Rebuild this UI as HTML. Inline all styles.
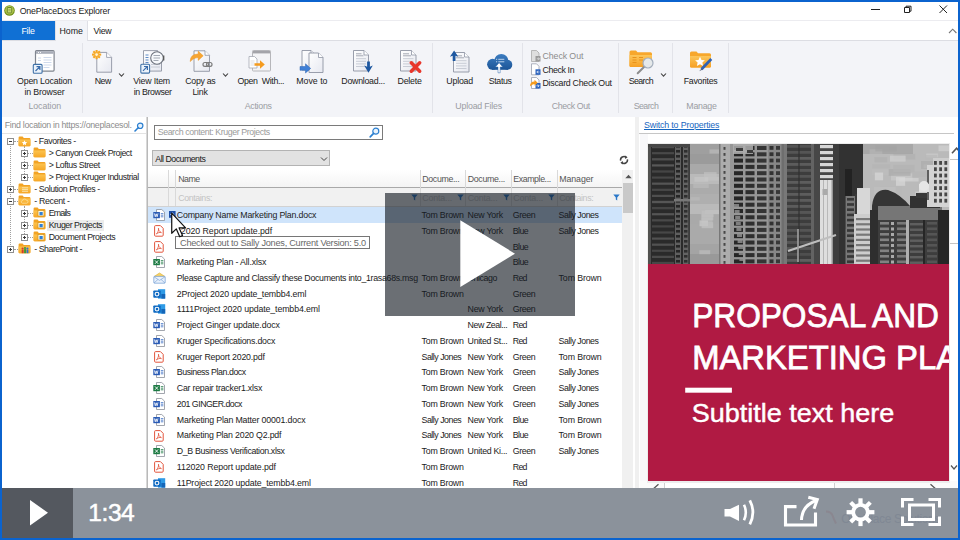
<!DOCTYPE html>
<html lang="en"><head><meta charset="utf-8"><title>OnePlaceDocs Explorer</title>
<style>
html,body{margin:0;padding:0;width:960px;height:540px;overflow:hidden;background:#fff;font-family:"Liberation Sans",sans-serif;}
#app{position:relative;width:960px;height:540px;overflow:hidden;background:#fff;}
.t{position:absolute;white-space:pre;}
.r{position:absolute;}
svg{position:absolute;overflow:visible;}
</style></head><body><div id="app">
<div class="r" style="left:0.0px;top:0.0px;width:960.0px;height:540.0px;background:#0b63ce;"></div>
<div class="r" style="left:2.0px;top:2.0px;width:956.0px;height:536.0px;background:#fff;"></div>
<div class="r" style="left:2.0px;top:20.0px;width:956.0px;height:1.0px;background:#ececf0;"></div>
<span class="t" style="left:19.7px;top:5.8px;font-size:8.8px;line-height:11.44px;color:#1a1a1a;letter-spacing:-0.170px;">OnePlaceDocs Explorer</span>
<svg style="left:3.5px;top:4.5px" width="11" height="11" viewBox="0 0 11 11"><circle cx="5.5" cy="5.5" r="5.3" fill="#6f8f1c"/><circle cx="5.5" cy="5.300" r="4.300" fill="#b4c94e"/><rect x="3.300" y="2.500" width="4.400" height="5.400" rx="0.600" fill="#cfdf80" stroke="#55751a" stroke-width="0.800"/><path d="M4.300 4.300h2.400M4.300 5.800h2.400" stroke="#6f8f1c" stroke-width="0.600"/></svg>
<svg style="left:860px;top:2px" width="98" height="18" viewBox="860 2 98 18"><path d="M871 9.5h9" stroke="#222" stroke-width="1" fill="none"/><path d="M904.5 7.5h5v5h-5zM906 7.5v-1.3h5v5h-1.4" stroke="#222" stroke-width="1" fill="none"/><path d="M939.5 5.5l7.5 7.5M947 5.5l-7.5 7.5" stroke="#222" stroke-width="1" fill="none"/></svg>
<div class="r" style="left:2.0px;top:21.0px;width:52.5px;height:18.8px;background:#1070d4;"></div>
<span class="t" style="left:21.5px;top:25.5px;font-size:8.8px;line-height:11.44px;color:#fff;letter-spacing:-0.297px;">File</span>
<div class="r" style="left:54.5px;top:21.0px;width:33.0px;height:20.0px;background:#f3f4f8;border-left:1px solid #e3e4ea;border-right:1px solid #e3e4ea;box-sizing:border-box;"></div>
<span class="t" style="left:93.5px;top:25.5px;font-size:8.8px;line-height:11.44px;color:#1a1a1a;letter-spacing:-0.230px;">View</span>
<svg style="left:948px;top:27px" width="10" height="8" viewBox="0 0 10 8"><path d="M1 6l3.7-3.8L8.4 6" stroke="#777" stroke-width="1.1" fill="none"/></svg>
<div class="r" style="left:87.5px;top:40.0px;width:870.5px;height:1.0px;background:#dcdde3;"></div>
<div class="r" style="left:2.0px;top:40.0px;width:52.5px;height:1.0px;background:#dcdde3;"></div>
<div class="r" style="left:2.0px;top:41.0px;width:956.0px;height:75.5px;background:#f3f4f8;"></div>
<div class="r" style="left:54.5px;top:21.0px;width:33.0px;height:21.0px;background:#f3f4f8;"></div>
<div class="r" style="left:54.5px;top:21.0px;width:1.0px;height:20.0px;background:#dfe0e6;"></div>
<div class="r" style="left:86.5px;top:21.0px;width:1.0px;height:20.0px;background:#dfe0e6;"></div>
<span class="t" style="left:59.5px;top:25.5px;font-size:8.8px;line-height:11.44px;color:#1a1a1a;letter-spacing:0.008px;">Home</span>
<div class="r" style="left:82.0px;top:43.0px;width:1.0px;height:70.0px;background:#e2e3e9;"></div>
<div class="r" style="left:432.0px;top:43.0px;width:1.0px;height:70.0px;background:#e2e3e9;"></div>
<div class="r" style="left:522.0px;top:43.0px;width:1.0px;height:70.0px;background:#e2e3e9;"></div>
<div class="r" style="left:617.8px;top:43.0px;width:1.0px;height:70.0px;background:#e2e3e9;"></div>
<div class="r" style="left:672.0px;top:43.0px;width:1.0px;height:70.0px;background:#e2e3e9;"></div>
<div class="r" style="left:727.8px;top:43.0px;width:1.0px;height:70.0px;background:#e2e3e9;"></div>
<span class="t" style="left:17.0px;top:75.8px;font-size:8.8px;line-height:11.44px;color:#222;letter-spacing:-0.172px;">Open Location</span>
<span class="t" style="left:24.5px;top:86.7px;font-size:8.8px;line-height:11.44px;color:#222;letter-spacing:-0.156px;">in Browser</span>
<span class="t" style="left:28.5px;top:101.0px;font-size:8.8px;line-height:11.44px;color:#9a9ca3;letter-spacing:-0.096px;">Location</span>
<span class="t" style="left:94.7px;top:75.8px;font-size:8.8px;line-height:11.44px;color:#222;letter-spacing:-0.503px;">New</span>
<span class="t" style="left:133.3px;top:75.8px;font-size:8.8px;line-height:11.44px;color:#222;letter-spacing:-0.197px;">View Item</span>
<span class="t" style="left:133.7px;top:86.7px;font-size:8.8px;line-height:11.44px;color:#222;letter-spacing:-0.356px;">in Browser</span>
<span class="t" style="left:185.3px;top:75.8px;font-size:8.8px;line-height:11.44px;color:#222;letter-spacing:-0.326px;">Copy as</span>
<span class="t" style="left:192.5px;top:86.7px;font-size:8.8px;line-height:11.44px;color:#222;letter-spacing:-0.285px;">Link</span>
<span class="t" style="left:237.5px;top:75.8px;font-size:8.8px;line-height:11.44px;color:#222;letter-spacing:-0.357px;">Open  With...</span>
<span class="t" style="left:296.3px;top:75.8px;font-size:8.8px;line-height:11.44px;color:#222;letter-spacing:-0.014px;">Move to</span>
<span class="t" style="left:341.3px;top:75.8px;font-size:8.8px;line-height:11.44px;color:#222;letter-spacing:-0.252px;">Download...</span>
<span class="t" style="left:397.5px;top:75.8px;font-size:8.8px;line-height:11.44px;color:#222;letter-spacing:-0.206px;">Delete</span>
<span class="t" style="left:244.7px;top:101.0px;font-size:8.8px;line-height:11.44px;color:#9a9ca3;letter-spacing:-0.266px;">Actions</span>
<span class="t" style="left:446.3px;top:75.8px;font-size:8.8px;line-height:11.44px;color:#222;letter-spacing:-0.198px;">Upload</span>
<span class="t" style="left:488.7px;top:75.8px;font-size:8.8px;line-height:11.44px;color:#222;letter-spacing:-0.326px;">Status</span>
<span class="t" style="left:455.3px;top:101.0px;font-size:8.8px;line-height:11.44px;color:#9a9ca3;letter-spacing:-0.184px;">Upload Files</span>
<span class="t" style="left:542.5px;top:50.8px;font-size:8.8px;line-height:11.44px;color:#8c8c8c;letter-spacing:-0.085px;">Check Out</span>
<span class="t" style="left:542.5px;top:64.5px;font-size:8.8px;line-height:11.44px;color:#222;letter-spacing:-0.377px;">Check In</span>
<span class="t" style="left:542.5px;top:78.0px;font-size:8.8px;line-height:11.44px;color:#222;letter-spacing:-0.272px;">Discard Check Out</span>
<span class="t" style="left:551.7px;top:101.0px;font-size:8.8px;line-height:11.44px;color:#9a9ca3;letter-spacing:-0.396px;">Check Out</span>
<span class="t" style="left:628.7px;top:75.8px;font-size:8.8px;line-height:11.44px;color:#222;letter-spacing:-0.596px;">Search</span>
<span class="t" style="left:633.7px;top:101.0px;font-size:8.8px;line-height:11.44px;color:#9a9ca3;letter-spacing:-0.546px;">Search</span>
<span class="t" style="left:683.7px;top:75.8px;font-size:8.8px;line-height:11.44px;color:#222;letter-spacing:-0.265px;">Favorites</span>
<span class="t" style="left:686.3px;top:101.0px;font-size:8.8px;line-height:11.44px;color:#9a9ca3;letter-spacing:-0.233px;">Manage</span>
<svg style="left:118.2px;top:71.5px" width="7" height="6" viewBox="0 0 7 6"><path d="M1 1.5l2.5 2.7L6 1.5" stroke="#444" stroke-width="1.1" fill="none"/></svg>
<svg style="left:222.3px;top:71.5px" width="7" height="6" viewBox="0 0 7 6"><path d="M1 1.5l2.5 2.7L6 1.5" stroke="#444" stroke-width="1.1" fill="none"/></svg>
<svg style="left:660.2px;top:71.5px" width="7" height="6" viewBox="0 0 7 6"><path d="M1 1.5l2.5 2.7L6 1.5" stroke="#444" stroke-width="1.1" fill="none"/></svg>
<svg style="left:0;top:44px" width="760" height="46" viewBox="0 44 760 46"><defs><linearGradient id="pg" x1="0" y1="0" x2="1" y2="1"><stop offset="0" stop-color="#ffffff"/><stop offset="1" stop-color="#e6e8f0"/></linearGradient><linearGradient id="cl" gradientUnits="userSpaceOnUse" x1="0" y1="54" x2="0" y2="70"><stop offset="0" stop-color="#3c7cc0"/><stop offset="1" stop-color="#1c5597"/></linearGradient><linearGradient id="fo" x1="0" y1="0" x2="0" y2="1"><stop offset="0" stop-color="#fcc65a"/><stop offset="1" stop-color="#f6a024"/></linearGradient></defs><rect x="35.5" y="50.7" width="18.600" height="20.400" rx="1" fill="#fff" stroke="#80858f" stroke-width="1.200"/><rect x="36" y="51.2" width="17.600" height="2.600" fill="#a9adb8"/><path d="M38 52.500h1M40 52.500h1" stroke="#fff" stroke-width="0.9"/><path d="M38 58h3M38 60.500h3M43.500 57.500h8M43.500 60h8M43.500 62.500h8M43.500 65h8M43.500 67.500h6" stroke="#c9d6ea" stroke-width="0.9"/><rect x="33.3" y="64.4" width="8.8" height="8.8" rx="1" fill="#eaf2fb" stroke="#3f71a8" stroke-width="1.1"/><path d="M35.5 71.0L39.699999999999996 66.80000000000001M36.49999999999999 66.60000000000001h3.4v3.4" fill="none" stroke="#3a6cab" stroke-width="1.200"/><path d="M96.8 52.4h9.8l5 5v14.8h-14.8z" fill="url(#pg)" stroke="#8e94a3" stroke-width="0.9"/><path d="M106.6 52.4v5h5" fill="#fff" stroke="#8e94a3" stroke-width="0.8"/><path d="M98.20 54.60L101.20 54.60" stroke="#f6a623" stroke-width="2.100"/><path d="M97.73 55.73L99.85 57.85" stroke="#f6a623" stroke-width="2.100"/><path d="M96.60 56.20L96.60 59.20" stroke="#f6a623" stroke-width="2.100"/><path d="M95.47 55.73L93.35 57.85" stroke="#f6a623" stroke-width="2.100"/><path d="M95.00 54.60L92.00 54.60" stroke="#f6a623" stroke-width="2.100"/><path d="M95.47 53.47L93.35 51.35" stroke="#f6a623" stroke-width="2.100"/><path d="M96.60 53.00L96.60 50.00" stroke="#f6a623" stroke-width="2.100"/><path d="M97.73 53.47L99.85 51.35" stroke="#f6a623" stroke-width="2.100"/><circle cx="96.6" cy="54.6" r="2.6" fill="#f8b23a"/><circle cx="96.6" cy="54.6" r="1.300" fill="#fff6dc"/><path d="M143.5 50.6h14l4 4v16.5h-18z" fill="url(#pg)" stroke="#8e94a3" stroke-width="0.9"/><path d="M157.5 50.6v4h4" fill="#fff" stroke="#8e94a3" stroke-width="0.8"/><path d="M145.500 55h3M145.500 57.500h3M145.500 60h3M145.500 62.500h3" stroke="#4c7fc0" stroke-width="0.9"/><path d="M151 64.500h9M151 67h9" stroke="#c3c7d1" stroke-width="0.9"/><circle cx="157" cy="58" r="6.300" fill="#f7f9fc" stroke="#6d727c" stroke-width="1.100"/><path d="M153.500 55.500h6.500M153.500 58h6.500M153.500 60.500h5" stroke="#9aa0ab" stroke-width="0.9"/><path d="M163.700 55.500v5" stroke="#555" stroke-width="1.300"/><rect x="140.8" y="64.3" width="8.8" height="8.8" rx="1" fill="#eaf2fb" stroke="#3f71a8" stroke-width="1.1"/><path d="M143.0 70.89999999999999L147.20000000000002 66.7M144.00000000000003 66.5h3.4v3.4" fill="none" stroke="#3a6cab" stroke-width="1.200"/><path d="M194 50.8h11.0l4.5 4.5v16.0h-15.5z" fill="url(#pg)" stroke="#8e94a3" stroke-width="0.9"/><path d="M205.0 50.8v4.5h4.5" fill="#fff" stroke="#8e94a3" stroke-width="0.8"/><path d="M190.200 61.500q0-7.500 8-7.500v-2.800l5 4.600-5 4.600v-2.900q-4.500 0-8 4z" fill="#f7a531" stroke="#e8901a" stroke-width="0.5"/><rect x="203" y="62.500" width="5.500" height="3.800" rx="1.900" fill="none" stroke="#7b7b7b" stroke-width="1.200"/><rect x="206.500" y="62.500" width="5.500" height="3.800" rx="1.900" fill="none" stroke="#7b7b7b" stroke-width="1.200"/><rect x="252.500" y="50.500" width="18" height="20.500" rx="0.8" fill="#f4f4f6" stroke="#b6b6ba" stroke-width="1"/><rect x="253" y="51" width="17" height="2.400" fill="#a4a4a9"/><path d="M249 56.500h5.500l2.500 2.500v9h-8z" fill="#fff" stroke="#a4a8b2" stroke-width="0.8"/><path d="M250.500 61h4M250.500 63h4M250.500 65h4" stroke="#d0d3da" stroke-width="0.700"/><path d="M254.500 63.200h5.500v-2.900l4.800 4.200-4.800 4.200v-2.900h-5.500z" fill="#f59b1d"/><path d="M302 50.5h9l4 4v15.5h-13z" fill="url(#pg)" stroke="#8e94a3" stroke-width="0.9"/><path d="M311 50.5v4h4" fill="#fff" stroke="#8e94a3" stroke-width="0.8"/><path d="M309 53h9.5l4.5 4.5v15.0h-14z" fill="url(#pg)" stroke="#8e94a3" stroke-width="0.9"/><path d="M318.5 53v4.5h4.5" fill="#fff" stroke="#8e94a3" stroke-width="0.8"/><path d="M300 66.500h5.500v-2.700l5.200 4.600-5.200 4.600v-2.700h-5.500z" fill="#3f7fd6" stroke="#2d64b3" stroke-width="0.5"/><path d="M353.5 50.5h10.5l4.5 4.5v16.0h-15z" fill="url(#pg)" stroke="#8e94a3" stroke-width="0.9"/><path d="M364.0 50.5v4.5h4.5" fill="#fff" stroke="#8e94a3" stroke-width="0.8"/><path d="M356.0 53.8h5.5M356.0 55.8h7.5" stroke="#9ca1ab" stroke-width="0.9"/><path d="M356.0 58.7h10" stroke="#c3c7d1" stroke-width="0.9"/><path d="M356.0 61.300000000000004h10" stroke="#c3c7d1" stroke-width="0.9"/><path d="M356.0 63.900000000000006h10" stroke="#c3c7d1" stroke-width="0.9"/><path d="M356.0 66.5h10" stroke="#c3c7d1" stroke-width="0.9"/><path d="M367.100 61.500h2.800v5.300l2.900-1.200-4.300 7.100-4.300-7.100 2.900 1.200z" fill="#1d57a0"/><path d="M400.5 50.5h11.0l4.5 4.5v16.0h-15.5z" fill="url(#pg)" stroke="#8e94a3" stroke-width="0.9"/><path d="M411.5 50.5v4.5h4.5" fill="#fff" stroke="#8e94a3" stroke-width="0.8"/><path d="M403.0 53.8h6.0M403.0 55.8h8.0" stroke="#9ca1ab" stroke-width="0.9"/><path d="M403.0 58.7h10.5" stroke="#c3c7d1" stroke-width="0.9"/><path d="M403.0 61.300000000000004h10.5" stroke="#c3c7d1" stroke-width="0.9"/><path d="M403.0 63.900000000000006h10.5" stroke="#c3c7d1" stroke-width="0.9"/><path d="M403.0 66.5h10.5" stroke="#c3c7d1" stroke-width="0.9"/><path d="M411.300 62.800l8.400 8.400M419.700 62.800l-8.400 8.400" stroke="#e8372c" stroke-width="3.500" stroke-linecap="round"/><path d="M453.5 52.5h11.0l4.5 4.5v15.0h-15.5z" fill="url(#pg)" stroke="#8e94a3" stroke-width="0.9"/><path d="M464.5 52.5v4.5h4.5" fill="#fff" stroke="#8e94a3" stroke-width="0.8"/><path d="M456.0 55.8h6.0M456.0 57.8h8.0" stroke="#9ca1ab" stroke-width="0.9"/><path d="M456.0 60.7h10.5" stroke="#c3c7d1" stroke-width="0.9"/><path d="M456.0 63.300000000000004h10.5" stroke="#c3c7d1" stroke-width="0.9"/><path d="M456.0 65.9h10.5" stroke="#c3c7d1" stroke-width="0.9"/><path d="M456.0 68.5h10.5" stroke="#c3c7d1" stroke-width="0.9"/><path d="M452.700 61h2.800v-5.300l2.800 1.100-4.200-6.300-4.200 6.300 2.800-1.100z" fill="#1d57a0"/><g fill="url(#cl)"><circle cx="492.600" cy="64.300" r="5.500"/><circle cx="501.300" cy="61" r="7.100"/><circle cx="507.300" cy="64.800" r="5"/><rect x="492" y="62" width="16" height="7.800"/></g><path d="M496 59.300h1.200M498.300 59.300h6M496 61.800h1.200M498.300 61.800h6" stroke="#cfe0f3" stroke-width="0.9"/><path d="M498 72.800v-5.800h-2.600l3.700-4.300 3.700 4.300h-2.600v5.800z" fill="#fff" stroke="#2a66ad" stroke-width="0.500"/><path d="M531.5 50.5h5l2.500 2.500v8.500h-7.500z" fill="#dedede" stroke="#a9a9a9" stroke-width="0.800"/><rect x="535.500" y="56" width="5" height="5.500" fill="#9a9a9a"/><path d="M536.800 58.800h2.400M538.300 57.500l1.200 1.300-1.200 1.300" stroke="#eee" stroke-width="0.700" fill="none"/><path d="M531.5 63.8h5l2.500 2.500v8.500h-7.500z" fill="#fff" stroke="#9ba0ad" stroke-width="0.800"/><rect x="535.500" y="69.300" width="5" height="5.500" fill="#2a62bd"/><path d="M539.500 72h-2.600M538 70.700l-1.200 1.300 1.200 1.300" stroke="#fff" stroke-width="0.700" fill="none"/><path d="M531.5 77.5h5l2.500 2.500v8.500h-7.500z" fill="#fff" stroke="#9ba0ad" stroke-width="0.800"/><rect x="535.500" y="83" width="5" height="5.500" fill="#2a62bd"/><path d="M536.500 85.800h2.400M537.900 84.500l1.200 1.300-1.200 1.300" stroke="#fff" stroke-width="0.700" fill="none"/><path d="M530 86.500q0-5 4.500-5v-1.800l3.200 3-3.200 3v-1.800q-2.500 0-4.500 2.600z" fill="#f59b1d"/><path d="M629.500 52q0-1.500 1.500-1.500h5l1.500 1.800h13q1.500 0 1.500 1.500v11.700q0 1.500-1.500 1.500h-19.500q-1.500 0-1.500-1.500z" fill="#f7a72c"/><path d="M629.500 55h22.500v10.500q0 1.500-1.500 1.500h-19.500q-1.500 0-1.500-1.500z" fill="url(#fo)"/><path d="M632.500 57.500h4M632.500 60h4M632.500 62.500h4M639 57.500h4M639 60h4" stroke="#e8921a" stroke-width="1"/><path d="M644.500 66.500l-6.800 6.800" stroke="#8d8d8d" stroke-width="2" stroke-linecap="round"/><circle cx="648" cy="63" r="5" fill="#e3eefa" fill-opacity="0.92" stroke="#a3adba" stroke-width="1.200"/><path d="M690 53q0-1.500 1.500-1.500h5l1.500 1.800h11.500q1.500 0 1.500 1.500v11.200q0 1.500-1.500 1.500h-18q-1.500 0-1.500-1.500z" fill="#f7a72c"/><path d="M690 56h21v10q0 1.500-1.500 1.500h-18q-1.500 0-1.500-1.500z" fill="url(#fo)"/><path d="M700 56.800l1.500 3.100 3.400.4-2.500 2.300.7 3.400-3.100-1.700-3.100 1.700.7-3.400-2.500-2.300 3.400-.4z" fill="#fff"/><path d="M711.300 59l-9.800 10.200" stroke="#2f62b5" stroke-width="2.700" stroke-linecap="butt"/><path d="M701.800 68.200l-2.600 3.100 3.600-1.700" fill="#56627a"/></svg>
<svg width="0" height="0" style="left:0;top:0"><defs><linearGradient id="fg" x1="0" y1="0" x2="0" y2="1"><stop offset="0" stop-color="#fcc450"/><stop offset="1" stop-color="#f6a726"/></linearGradient></defs></svg>
<span class="t" style="left:4.7px;top:120.0px;font-size:8.8px;line-height:11.44px;color:#8c8c8c;letter-spacing:-0.282px;">Find location in https://oneplacesol.</span>
<svg style="left:133.5px;top:121.5px" width="10" height="10" viewBox="0 0 10 10"><circle cx="6.2" cy="3.8" r="2.7" fill="#e8f2fb" stroke="#2b7fd0" stroke-width="1.2"/><path d="M4.2 5.8L1 9" stroke="#2b7fd0" stroke-width="1.6" stroke-linecap="round"/></svg>
<div class="r" style="left:2.0px;top:133.3px;width:143.5px;height:0.9px;background:#e3e3e3;"></div>
<div class="r" style="left:145.5px;top:117.0px;width:2.5px;height:371.0px;background:#b9b9b9;"></div>
<div class="r" style="left:146.3px;top:117.0px;width:0.9px;height:371.0px;background:#d8d8d8;"></div>
<div class="r" style="left:10px;top:146px;width:0;height:103px;border-left:1px dotted #a0a0a0"></div>
<div class="r" style="left:24px;top:146px;width:0;height:32px;border-left:1px dotted #a0a0a0"></div>
<div class="r" style="left:24px;top:206px;width:0;height:32px;border-left:1px dotted #a0a0a0"></div>
<svg style="left:6.9px;top:137.8px" width="7" height="7" viewBox="0 0 7 7"><rect x="0.5" y="0.5" width="6" height="6" fill="#fff" stroke="#8f8f8f" stroke-width="1"/><path d="M2 3.5h3" stroke="#3a3a3a" stroke-width="1" fill="none"/></svg>
<div class="r" style="left:13.9px;top:140.8px;width:4.5px;height:0;border-top:1px dotted #a0a0a0"></div>
<svg style="left:18.3px;top:135.5px" width="13" height="11" viewBox="0 0 13 11"><path d="M0.6 1.6q0-1 1-1h3l1.2 1.3h5.6q1 0 1 1v6.3q0 1-1 1H1.6q-1 0-1-1z" fill="#f2a324"/><path d="M0.6 3.4h11.8v5.8q0 1-1 1H1.6q-1 0-1-1z" fill="url(#fg)"/><path d="M6.5 4.2l.8 1.7 1.8.2-1.3 1.3.3 1.8-1.6-.9-1.6.9.3-1.8L3.9 6.1l1.8-.2z" fill="#fff"/></svg>
<span class="t" style="left:34.2px;top:136.3px;font-size:8.8px;line-height:11.44px;color:#1e1e1e;letter-spacing:-0.411px;">- Favorites -</span>
<svg style="left:21.0px;top:149.7px" width="7" height="7" viewBox="0 0 7 7"><rect x="0.5" y="0.5" width="6" height="6" fill="#fff" stroke="#8f8f8f" stroke-width="1"/><path d="M2 3.5h3M3.5 2v3" stroke="#3a3a3a" stroke-width="1" fill="none"/></svg>
<div class="r" style="left:28.0px;top:152.7px;width:4.5px;height:0;border-top:1px dotted #a0a0a0"></div>
<svg style="left:32.5px;top:147.39999999999998px" width="13" height="11" viewBox="0 0 13 11"><path d="M0.6 1.6q0-1 1-1h3l1.2 1.3h5.6q1 0 1 1v6.3q0 1-1 1H1.6q-1 0-1-1z" fill="#f2a324"/><path d="M0.6 3.4h11.8v5.8q0 1-1 1H1.6q-1 0-1-1z" fill="url(#fg)"/></svg>
<span class="t" style="left:48.7px;top:148.2px;font-size:8.8px;line-height:11.44px;color:#1e1e1e;letter-spacing:-0.484px;">&gt; Canyon Creek Project</span>
<svg style="left:21.0px;top:161.8px" width="7" height="7" viewBox="0 0 7 7"><rect x="0.5" y="0.5" width="6" height="6" fill="#fff" stroke="#8f8f8f" stroke-width="1"/><path d="M2 3.5h3M3.5 2v3" stroke="#3a3a3a" stroke-width="1" fill="none"/></svg>
<div class="r" style="left:28.0px;top:164.8px;width:4.5px;height:0;border-top:1px dotted #a0a0a0"></div>
<svg style="left:32.5px;top:159.5px" width="13" height="11" viewBox="0 0 13 11"><path d="M0.6 1.6q0-1 1-1h3l1.2 1.3h5.6q1 0 1 1v6.3q0 1-1 1H1.6q-1 0-1-1z" fill="#f2a324"/><path d="M0.6 3.4h11.8v5.8q0 1-1 1H1.6q-1 0-1-1z" fill="url(#fg)"/></svg>
<span class="t" style="left:48.7px;top:160.3px;font-size:8.8px;line-height:11.44px;color:#1e1e1e;letter-spacing:-0.431px;">&gt; Loftus Street</span>
<svg style="left:21.0px;top:173.6px" width="7" height="7" viewBox="0 0 7 7"><rect x="0.5" y="0.5" width="6" height="6" fill="#fff" stroke="#8f8f8f" stroke-width="1"/><path d="M2 3.5h3M3.5 2v3" stroke="#3a3a3a" stroke-width="1" fill="none"/></svg>
<div class="r" style="left:28.0px;top:176.6px;width:4.5px;height:0;border-top:1px dotted #a0a0a0"></div>
<svg style="left:32.5px;top:171.29999999999998px" width="13" height="11" viewBox="0 0 13 11"><path d="M0.6 1.6q0-1 1-1h3l1.2 1.3h5.6q1 0 1 1v6.3q0 1-1 1H1.6q-1 0-1-1z" fill="#f2a324"/><path d="M0.6 3.4h11.8v5.8q0 1-1 1H1.6q-1 0-1-1z" fill="url(#fg)"/></svg>
<span class="t" style="left:48.7px;top:172.1px;font-size:8.8px;line-height:11.44px;color:#1e1e1e;letter-spacing:-0.443px;">&gt; Project Kruger Industrial</span>
<svg style="left:6.9px;top:185.7px" width="7" height="7" viewBox="0 0 7 7"><rect x="0.5" y="0.5" width="6" height="6" fill="#fff" stroke="#8f8f8f" stroke-width="1"/><path d="M2 3.5h3M3.5 2v3" stroke="#3a3a3a" stroke-width="1" fill="none"/></svg>
<div class="r" style="left:13.9px;top:188.7px;width:4.5px;height:0;border-top:1px dotted #a0a0a0"></div>
<svg style="left:18.3px;top:183.39999999999998px" width="13" height="11" viewBox="0 0 13 11"><path d="M0.6 1.6q0-1 1-1h3l1.2 1.3h5.6q1 0 1 1v6.3q0 1-1 1H1.6q-1 0-1-1z" fill="#f2a324"/><path d="M0.6 3.4h11.8v5.8q0 1-1 1H1.6q-1 0-1-1z" fill="url(#fg)"/><path d="M4 4.8h6M4 6.6h6M4 8.3h6" stroke="#fbe7b4" stroke-width="0.9"/></svg>
<span class="t" style="left:34.2px;top:184.2px;font-size:8.8px;line-height:11.44px;color:#1e1e1e;letter-spacing:-0.420px;">- Solution Profiles -</span>
<svg style="left:6.9px;top:197.7px" width="7" height="7" viewBox="0 0 7 7"><rect x="0.5" y="0.5" width="6" height="6" fill="#fff" stroke="#8f8f8f" stroke-width="1"/><path d="M2 3.5h3" stroke="#3a3a3a" stroke-width="1" fill="none"/></svg>
<div class="r" style="left:13.9px;top:200.7px;width:4.5px;height:0;border-top:1px dotted #a0a0a0"></div>
<svg style="left:18.3px;top:195.39999999999998px" width="13" height="11" viewBox="0 0 13 11"><path d="M0.6 1.6q0-1 1-1h3l1.2 1.3h5.6q1 0 1 1v6.3q0 1-1 1H1.6q-1 0-1-1z" fill="#f2a324"/><path d="M0.6 3.4h11.8v5.8q0 1-1 1H1.6q-1 0-1-1z" fill="url(#fg)"/><path d="M4.2 8.2a1.4 1.4 0 0 1 .3-2.7 2 2 0 0 1 3.8-.3 1.5 1.5 0 0 1 .4 3z" fill="none" stroke="#fbe0a0" stroke-width="0.8"/></svg>
<span class="t" style="left:34.2px;top:196.2px;font-size:8.8px;line-height:11.44px;color:#1e1e1e;letter-spacing:-0.312px;">- Recent -</span>
<svg style="left:21.0px;top:209.6px" width="7" height="7" viewBox="0 0 7 7"><rect x="0.5" y="0.5" width="6" height="6" fill="#fff" stroke="#8f8f8f" stroke-width="1"/><path d="M2 3.5h3M3.5 2v3" stroke="#3a3a3a" stroke-width="1" fill="none"/></svg>
<div class="r" style="left:28.0px;top:212.6px;width:4.5px;height:0;border-top:1px dotted #a0a0a0"></div>
<svg style="left:32.5px;top:207.29999999999998px" width="13" height="11" viewBox="0 0 13 11"><path d="M0.6 1.6q0-1 1-1h3l1.2 1.3h5.6q1 0 1 1v6.3q0 1-1 1H1.6q-1 0-1-1z" fill="#f2a324"/><path d="M0.6 3.4h11.8v5.8q0 1-1 1H1.6q-1 0-1-1z" fill="url(#fg)"/><rect x="5" y="3.6" width="6" height="5.4" fill="#fff7dc" stroke="#c98a17" stroke-width="0.6"/><rect x="6.5" y="5" width="3.2" height="3.2" fill="#2f7fd6"/></svg>
<span class="t" style="left:48.7px;top:208.1px;font-size:8.8px;line-height:11.44px;color:#1e1e1e;letter-spacing:-0.851px;">Emails</span>
<div class="r" style="left:46.7px;top:219.6px;width:57.1px;height:11.0px;background:#ececec;"></div>
<svg style="left:21.0px;top:221.6px" width="7" height="7" viewBox="0 0 7 7"><rect x="0.5" y="0.5" width="6" height="6" fill="#fff" stroke="#8f8f8f" stroke-width="1"/><path d="M2 3.5h3M3.5 2v3" stroke="#3a3a3a" stroke-width="1" fill="none"/></svg>
<div class="r" style="left:28.0px;top:224.6px;width:4.5px;height:0;border-top:1px dotted #a0a0a0"></div>
<svg style="left:32.5px;top:219.29999999999998px" width="13" height="11" viewBox="0 0 13 11"><path d="M0.6 1.6q0-1 1-1h3l1.2 1.3h5.6q1 0 1 1v6.3q0 1-1 1H1.6q-1 0-1-1z" fill="#f2a324"/><path d="M0.6 3.4h11.8v5.8q0 1-1 1H1.6q-1 0-1-1z" fill="url(#fg)"/><rect x="5" y="3.6" width="6" height="5.4" fill="#fff7dc" stroke="#c98a17" stroke-width="0.6"/><rect x="6.5" y="5" width="3.2" height="3.2" fill="#2f7fd6"/></svg>
<span class="t" style="left:48.7px;top:220.1px;font-size:8.8px;line-height:11.44px;color:#1e1e1e;letter-spacing:-0.488px;">Kruger Projects</span>
<svg style="left:21.0px;top:233.7px" width="7" height="7" viewBox="0 0 7 7"><rect x="0.5" y="0.5" width="6" height="6" fill="#fff" stroke="#8f8f8f" stroke-width="1"/><path d="M2 3.5h3M3.5 2v3" stroke="#3a3a3a" stroke-width="1" fill="none"/></svg>
<div class="r" style="left:28.0px;top:236.7px;width:4.5px;height:0;border-top:1px dotted #a0a0a0"></div>
<svg style="left:32.5px;top:231.39999999999998px" width="13" height="11" viewBox="0 0 13 11"><path d="M0.6 1.6q0-1 1-1h3l1.2 1.3h5.6q1 0 1 1v6.3q0 1-1 1H1.6q-1 0-1-1z" fill="#f2a324"/><path d="M0.6 3.4h11.8v5.8q0 1-1 1H1.6q-1 0-1-1z" fill="url(#fg)"/><rect x="5" y="3.6" width="6" height="5.4" fill="#fff7dc" stroke="#c98a17" stroke-width="0.6"/><rect x="6.5" y="5" width="3.2" height="3.2" fill="#2f7fd6"/></svg>
<span class="t" style="left:48.7px;top:232.2px;font-size:8.8px;line-height:11.44px;color:#1e1e1e;letter-spacing:-0.455px;">Document Projects</span>
<svg style="left:6.9px;top:245.7px" width="7" height="7" viewBox="0 0 7 7"><rect x="0.5" y="0.5" width="6" height="6" fill="#fff" stroke="#8f8f8f" stroke-width="1"/><path d="M2 3.5h3M3.5 2v3" stroke="#3a3a3a" stroke-width="1" fill="none"/></svg>
<div class="r" style="left:13.9px;top:248.7px;width:4.5px;height:0;border-top:1px dotted #a0a0a0"></div>
<svg style="left:18.3px;top:243.39999999999998px" width="13" height="11" viewBox="0 0 13 11"><path d="M0.6 1.6q0-1 1-1h3l1.2 1.3h5.6q1 0 1 1v6.3q0 1-1 1H1.6q-1 0-1-1z" fill="#f2a324"/><path d="M0.6 3.4h11.8v5.8q0 1-1 1H1.6q-1 0-1-1z" fill="url(#fg)"/><circle cx="4.6" cy="5.5" r="1.1" fill="#d13c2f"/><rect x="3.7" y="6.6" width="1.9" height="3.6" fill="#d13c2f"/><circle cx="7" cy="5" r="1.1" fill="#3c9a3c"/><rect x="6.1" y="6.1" width="1.9" height="4.1" fill="#3c9a3c"/><circle cx="9.4" cy="5.5" r="1.1" fill="#2f6fd1"/><rect x="8.5" y="6.6" width="1.9" height="3.6" fill="#2f6fd1"/></svg>
<span class="t" style="left:34.2px;top:244.2px;font-size:8.8px;line-height:11.44px;color:#1e1e1e;letter-spacing:-0.463px;">- SharePoint -</span>
<div class="r" style="left:153.5px;top:124.5px;width:229.0px;height:15.0px;background:#fff;border:1px solid #7a7a7a;box-sizing:border-box;"></div>
<span class="t" style="left:157.7px;top:127.0px;font-size:8.8px;line-height:11.44px;color:#9a9a9a;letter-spacing:-0.406px;">Search content: Kruger Projects</span>
<svg style="left:369px;top:127px" width="11" height="11" viewBox="0 0 11 11"><circle cx="6.8" cy="4.2" r="3" fill="#eaf3fc" stroke="#2b7fd0" stroke-width="1.2"/><path d="M4.6 6.4L1.2 9.8" stroke="#2b7fd0" stroke-width="1.7" stroke-linecap="round"/></svg>
<div class="r" style="left:152.0px;top:150.3px;width:177.5px;height:15.4px;background:#e2e2e2;border:1px solid #b3b3b3;box-sizing:border-box;"></div>
<span class="t" style="left:155.3px;top:154.0px;font-size:8.8px;line-height:11.44px;color:#1a1a1a;letter-spacing:-0.517px;">All Documents</span>
<svg style="left:319.5px;top:155.5px" width="8" height="6" viewBox="0 0 8 6"><path d="M1 1.5l3 3 3-3" stroke="#444" stroke-width="1" fill="none"/></svg>
<svg style="left:618.5px;top:154.5px" width="10" height="10" viewBox="0 0 10 10"><path d="M1.6 5.6a3.4 3.4 0 0 1 5.6-3.2" fill="none" stroke="#444" stroke-width="1.5"/><path d="M8.4 4.4a3.4 3.4 0 0 1-5.6 3.2" fill="none" stroke="#444" stroke-width="1.5"/><path d="M6 .6l2.6 1.6-2.4 1.7zM4 9.4L1.4 7.8l2.4-1.7z" fill="#444"/></svg>
<div class="r" style="left:148.0px;top:169.5px;width:474.0px;height:17.5px;background:linear-gradient(#ffffff,#f4f4f4);"></div>
<div class="r" style="left:148.0px;top:187.0px;width:474.0px;height:1.0px;background:#a9a9a9;"></div>
<div class="r" style="left:148.0px;top:188.0px;width:474.0px;height:18.0px;background:#f1f1f1;"></div>
<div class="r" style="left:148.0px;top:206.0px;width:474.0px;height:1.0px;background:#d2d2d2;"></div>
<div class="r" style="left:168.2px;top:170.0px;width:1.0px;height:36.0px;background:#d9d9d9;"></div>
<div class="r" style="left:174.8px;top:170.0px;width:1.0px;height:36.0px;background:#d9d9d9;"></div>
<div class="r" style="left:420.2px;top:170.0px;width:1.0px;height:36.0px;background:#d9d9d9;"></div>
<div class="r" style="left:465.2px;top:170.0px;width:1.0px;height:36.0px;background:#d9d9d9;"></div>
<div class="r" style="left:511.2px;top:170.0px;width:1.0px;height:36.0px;background:#d9d9d9;"></div>
<div class="r" style="left:556.8px;top:170.0px;width:1.0px;height:36.0px;background:#d9d9d9;"></div>
<span class="t" style="left:178.2px;top:174.0px;font-size:8.8px;line-height:11.44px;color:#555;letter-spacing:-0.467px;">Name</span>
<span class="t" style="left:422.3px;top:174.0px;font-size:8.8px;line-height:11.44px;color:#555;letter-spacing:-0.344px;">Docume...</span>
<span class="t" style="left:467.7px;top:174.0px;font-size:8.8px;line-height:11.44px;color:#555;letter-spacing:-0.310px;">Docume...</span>
<span class="t" style="left:513.3px;top:174.0px;font-size:8.8px;line-height:11.44px;color:#555;letter-spacing:-0.416px;">Example...</span>
<span class="t" style="left:559.3px;top:174.0px;font-size:8.8px;line-height:11.44px;color:#555;letter-spacing:-0.105px;">Manager</span>
<span class="t" style="left:178.2px;top:192.8px;font-size:8.8px;line-height:11.44px;color:#c3c3c3;letter-spacing:-0.375px;">Contains:</span>
<span class="t" style="left:422.3px;top:192.8px;font-size:8.8px;line-height:11.44px;color:#c3c3c3;letter-spacing:-0.139px;">Conta...</span>
<span class="t" style="left:467.7px;top:192.8px;font-size:8.8px;line-height:11.44px;color:#c3c3c3;letter-spacing:-0.127px;">Conta...</span>
<span class="t" style="left:513.3px;top:192.8px;font-size:8.8px;line-height:11.44px;color:#c3c3c3;letter-spacing:-0.139px;">Conta...</span>
<span class="t" style="left:559.3px;top:192.8px;font-size:8.8px;line-height:11.44px;color:#c3c3c3;letter-spacing:-0.352px;">Contains:</span>
<svg style="left:411.1px;top:194px" width="7" height="7" viewBox="0 0 7 7"><path d="M0.3 0.5h6.4L4.2 3.4v3.2L2.8 5.6V3.4z" fill="#2b78c9"/></svg>
<svg style="left:456.8px;top:194px" width="7" height="7" viewBox="0 0 7 7"><path d="M0.3 0.5h6.4L4.2 3.4v3.2L2.8 5.6V3.4z" fill="#2b78c9"/></svg>
<svg style="left:502.5px;top:194px" width="7" height="7" viewBox="0 0 7 7"><path d="M0.3 0.5h6.4L4.2 3.4v3.2L2.8 5.6V3.4z" fill="#2b78c9"/></svg>
<svg style="left:547.8px;top:194px" width="7" height="7" viewBox="0 0 7 7"><path d="M0.3 0.5h6.4L4.2 3.4v3.2L2.8 5.6V3.4z" fill="#2b78c9"/></svg>
<svg style="left:612.5px;top:194px" width="7" height="7" viewBox="0 0 7 7"><path d="M0.3 0.5h6.4L4.2 3.4v3.2L2.8 5.6V3.4z" fill="#2b78c9"/></svg>
<div class="r" style="left:622.0px;top:169.5px;width:11.3px;height:318.5px;background:#f0f0f0;"></div>
<div class="r" style="left:623.3px;top:182.5px;width:9.4px;height:30.8px;background:#c9c9c9;"></div>
<svg style="left:624.5px;top:173.5px" width="7" height="5" viewBox="0 0 7 5"><path d="M0.3 4.3L3.5 0.8l3.2 3.5z" fill="#555"/></svg>
<div class="r" style="left:635.0px;top:117.0px;width:3.5px;height:371.0px;background:#f0f0f0;"></div>
<div class="r" style="left:148.0px;top:207.0px;width:474.0px;height:15.5px;background:#cfe4fb;"></div>
<svg style="left:153px;top:209.0px" width="12" height="12" viewBox="0 0 12 12"><path d="M3.5 0.5h5.2l2.8 2.6v8.4h-8z" fill="#fff" stroke="#8a8f99" stroke-width="0.8"/><path d="M7.8 4.6h2.6M7.8 6.2h2.6M7.8 7.8h2.6" stroke="#3b6fc4" stroke-width="0.8"/><rect x="0.3" y="3" width="6.6" height="6.2" fill="#2a5bb5"/><path d="M1.4 4.4l.9 3.4.9-3 .9 3 .9-3.4" fill="none" stroke="#fff" stroke-width="0.8"/></svg>
<span class="t" style="left:176.8px;top:210.0px;font-size:8.8px;line-height:11.44px;color:#222;letter-spacing:-0.194px;">Company Name Marketing Plan.docx</span>
<span class="t" style="left:421.5px;top:210.0px;font-size:8.8px;line-height:11.44px;color:#222;letter-spacing:-0.200px;">Tom Brown</span>
<span class="t" style="left:467.6px;top:210.0px;font-size:8.8px;line-height:11.44px;color:#222;letter-spacing:-0.246px;">New York</span>
<span class="t" style="left:512.8px;top:210.0px;font-size:8.8px;line-height:11.44px;color:#222;letter-spacing:-0.371px;">Green</span>
<span class="t" style="left:558.6px;top:210.0px;font-size:8.8px;line-height:11.44px;color:#222;letter-spacing:-0.464px;">Sally Jones</span>
<svg style="left:154.2px;top:225.14000000000001px" width="10" height="12" viewBox="0 0 10 12"><path d="M1.6 0.6h4.8l2.8 2.8v6.8q0 1-1 1H1.6q-1 0-1-1V1.6q0-1 1-1z" fill="#fff" stroke="#e2543c" stroke-width="1"/><path d="M2.4 9c1.4-1.4 2.6-4.2 2.2-5.8-.8.4.2 3.2 2.8 4.4-1.600-.6-3.800.2-5 1.400z" fill="none" stroke="#e2543c" stroke-width="0.8"/></svg>
<span class="t" style="left:180.8px;top:225.7px;font-size:8.8px;line-height:11.44px;color:#222;letter-spacing:-0.052px;">2020 Report update.pdf</span>
<span class="t" style="left:421.5px;top:225.7px;font-size:8.8px;line-height:11.44px;color:#222;letter-spacing:-0.200px;">Tom Brown</span>
<span class="t" style="left:467.6px;top:225.7px;font-size:8.8px;line-height:11.44px;color:#222;letter-spacing:-0.246px;">New York</span>
<span class="t" style="left:512.8px;top:225.7px;font-size:8.8px;line-height:11.44px;color:#222;letter-spacing:-0.602px;">Blue</span>
<span class="t" style="left:558.6px;top:225.7px;font-size:8.8px;line-height:11.44px;color:#222;letter-spacing:-0.464px;">Sally Jones</span>
<svg style="left:154.2px;top:240.88px" width="10" height="12" viewBox="0 0 10 12"><path d="M1.6 0.6h4.8l2.8 2.8v6.8q0 1-1 1H1.6q-1 0-1-1V1.6q0-1 1-1z" fill="#fff" stroke="#e2543c" stroke-width="1"/><path d="M2.4 9c1.4-1.4 2.6-4.2 2.2-5.8-.8.4.2 3.2 2.8 4.4-1.600-.6-3.800.2-5 1.400z" fill="none" stroke="#e2543c" stroke-width="0.8"/></svg>
<span class="t" style="left:512.8px;top:241.5px;font-size:8.8px;line-height:11.44px;color:#222;letter-spacing:-0.602px;">Blue</span>
<svg style="left:153px;top:256.22px" width="12" height="12" viewBox="0 0 12 12"><path d="M3.5 0.5h5.2l2.8 2.6v8.4h-8z" fill="#fff" stroke="#8a8f99" stroke-width="0.8"/><path d="M7.8 4.6h2.6M7.8 6.2h2.6M7.8 7.8h2.6" stroke="#1e7a45" stroke-width="0.8"/><rect x="0.3" y="3" width="6.6" height="6.2" fill="#1c7a43"/><path d="M2 4.4l3.2 3.4M5.2 4.4L2 7.8" fill="none" stroke="#fff" stroke-width="0.9"/></svg>
<span class="t" style="left:176.8px;top:257.2px;font-size:8.8px;line-height:11.44px;color:#222;letter-spacing:-0.160px;">Marketing Plan - All.xlsx</span>
<span class="t" style="left:512.8px;top:257.2px;font-size:8.8px;line-height:11.44px;color:#222;letter-spacing:-0.602px;">Blue</span>
<svg style="left:153px;top:271.96px" width="13" height="12" viewBox="0 0 13 12"><path d="M1 4.600L6.500 1l5.500 3.600z" fill="#f6d36a" stroke="#d8a928" stroke-width="0.6"/><rect x="0.8" y="4.400" width="11.400" height="6.800" rx="0.6" fill="#e9f1fb" stroke="#7fa6d8" stroke-width="0.8"/><path d="M1 4.800l5.500 3.600 5.500-3.600M1 11l4-3.600M12 11l-4-3.600" fill="none" stroke="#7fa6d8" stroke-width="0.7"/></svg>
<span class="t" style="left:176.8px;top:272.9px;font-size:8.8px;line-height:11.44px;color:#222;letter-spacing:-0.290px;">Please Capture and Classify these Documents into_1rasa68s.msg</span>
<span class="t" style="left:421.5px;top:272.9px;font-size:8.8px;line-height:11.44px;color:#222;letter-spacing:-0.200px;">Tom Brown</span>
<span class="t" style="left:467.6px;top:272.9px;font-size:8.8px;line-height:11.44px;color:#222;letter-spacing:-0.426px;">Chicago</span>
<span class="t" style="left:512.8px;top:272.9px;font-size:8.8px;line-height:11.44px;color:#222;letter-spacing:-0.714px;">Red</span>
<span class="t" style="left:558.6px;top:272.9px;font-size:8.8px;line-height:11.44px;color:#222;letter-spacing:-0.122px;">Tom Brown</span>
<svg style="left:153px;top:287.7px" width="13" height="12" viewBox="0 0 13 12"><rect x="5" y="1.2" width="7.2" height="9.4" fill="#2f9be6"/><rect x="8.4" y="6" width="3.8" height="4.6" fill="#1566b8"/><rect x="0.3" y="2.4" width="7.4" height="7.4" rx="0.8" fill="#0f6ac2"/><circle cx="4" cy="6.1" r="1.9" fill="none" stroke="#fff" stroke-width="1.1"/></svg>
<span class="t" style="left:176.8px;top:288.7px;font-size:8.8px;line-height:11.44px;color:#222;letter-spacing:-0.165px;">2Project 2020 update_tembb4.eml</span>
<span class="t" style="left:421.5px;top:288.7px;font-size:8.8px;line-height:11.44px;color:#222;letter-spacing:-0.200px;">Tom Brown</span>
<span class="t" style="left:512.8px;top:288.7px;font-size:8.8px;line-height:11.44px;color:#222;letter-spacing:-0.371px;">Green</span>
<svg style="left:153px;top:303.44px" width="13" height="12" viewBox="0 0 13 12"><rect x="5" y="1.2" width="7.2" height="9.4" fill="#2f9be6"/><rect x="8.4" y="6" width="3.8" height="4.6" fill="#1566b8"/><rect x="0.3" y="2.4" width="7.4" height="7.4" rx="0.8" fill="#0f6ac2"/><circle cx="4" cy="6.1" r="1.9" fill="none" stroke="#fff" stroke-width="1.1"/></svg>
<span class="t" style="left:176.8px;top:304.4px;font-size:8.8px;line-height:11.44px;color:#222;letter-spacing:-0.124px;">1111Project 2020 update_tembb4.eml</span>
<span class="t" style="left:467.6px;top:304.4px;font-size:8.8px;line-height:11.44px;color:#222;letter-spacing:-0.246px;">New York</span>
<span class="t" style="left:512.8px;top:304.4px;font-size:8.8px;line-height:11.44px;color:#222;letter-spacing:-0.371px;">Green</span>
<svg style="left:153px;top:319.18px" width="12" height="12" viewBox="0 0 12 12"><path d="M3.5 0.5h5.2l2.8 2.6v8.4h-8z" fill="#fff" stroke="#8a8f99" stroke-width="0.8"/><path d="M7.8 4.6h2.6M7.8 6.2h2.6M7.8 7.8h2.6" stroke="#3b6fc4" stroke-width="0.8"/><rect x="0.3" y="3" width="6.6" height="6.2" fill="#2a5bb5"/><path d="M1.4 4.4l.9 3.4.9-3 .9 3 .9-3.4" fill="none" stroke="#fff" stroke-width="0.8"/></svg>
<span class="t" style="left:176.8px;top:320.2px;font-size:8.8px;line-height:11.44px;color:#222;letter-spacing:-0.143px;">Project Ginger update.docx</span>
<span class="t" style="left:467.6px;top:320.2px;font-size:8.8px;line-height:11.44px;color:#222;letter-spacing:-0.436px;">New Zeal...</span>
<span class="t" style="left:512.8px;top:320.2px;font-size:8.8px;line-height:11.44px;color:#222;letter-spacing:-0.714px;">Red</span>
<svg style="left:153px;top:334.92px" width="12" height="12" viewBox="0 0 12 12"><path d="M3.5 0.5h5.2l2.8 2.6v8.4h-8z" fill="#fff" stroke="#8a8f99" stroke-width="0.8"/><path d="M7.8 4.6h2.6M7.8 6.2h2.6M7.8 7.8h2.6" stroke="#3b6fc4" stroke-width="0.8"/><rect x="0.3" y="3" width="6.6" height="6.2" fill="#2a5bb5"/><path d="M1.4 4.4l.9 3.4.9-3 .9 3 .9-3.4" fill="none" stroke="#fff" stroke-width="0.8"/></svg>
<span class="t" style="left:176.8px;top:335.9px;font-size:8.8px;line-height:11.44px;color:#222;letter-spacing:-0.225px;">Kruger Specifications.docx</span>
<span class="t" style="left:421.5px;top:335.9px;font-size:8.8px;line-height:11.44px;color:#222;letter-spacing:-0.200px;">Tom Brown</span>
<span class="t" style="left:467.6px;top:335.9px;font-size:8.8px;line-height:11.44px;color:#222;letter-spacing:-0.319px;">United St...</span>
<span class="t" style="left:512.8px;top:335.9px;font-size:8.8px;line-height:11.44px;color:#222;letter-spacing:-0.714px;">Red</span>
<span class="t" style="left:558.6px;top:335.9px;font-size:8.8px;line-height:11.44px;color:#222;letter-spacing:-0.464px;">Sally Jones</span>
<svg style="left:154.2px;top:351.05999999999995px" width="10" height="12" viewBox="0 0 10 12"><path d="M1.6 0.6h4.8l2.8 2.8v6.8q0 1-1 1H1.6q-1 0-1-1V1.6q0-1 1-1z" fill="#fff" stroke="#e2543c" stroke-width="1"/><path d="M2.4 9c1.4-1.4 2.6-4.2 2.2-5.8-.8.4.2 3.2 2.8 4.4-1.600-.6-3.800.2-5 1.400z" fill="none" stroke="#e2543c" stroke-width="0.8"/></svg>
<span class="t" style="left:176.8px;top:351.6px;font-size:8.8px;line-height:11.44px;color:#222;letter-spacing:-0.180px;">Kruger Report 2020.pdf</span>
<span class="t" style="left:421.5px;top:351.6px;font-size:8.8px;line-height:11.44px;color:#222;letter-spacing:-0.473px;">Sally Jones</span>
<span class="t" style="left:467.6px;top:351.6px;font-size:8.8px;line-height:11.44px;color:#222;letter-spacing:-0.246px;">New York</span>
<span class="t" style="left:512.8px;top:351.6px;font-size:8.8px;line-height:11.44px;color:#222;letter-spacing:-0.371px;">Green</span>
<span class="t" style="left:558.6px;top:351.6px;font-size:8.8px;line-height:11.44px;color:#222;letter-spacing:-0.122px;">Tom Brown</span>
<svg style="left:153px;top:366.4px" width="12" height="12" viewBox="0 0 12 12"><path d="M3.5 0.5h5.2l2.8 2.6v8.4h-8z" fill="#fff" stroke="#8a8f99" stroke-width="0.8"/><path d="M7.8 4.6h2.6M7.8 6.2h2.6M7.8 7.8h2.6" stroke="#3b6fc4" stroke-width="0.8"/><rect x="0.3" y="3" width="6.6" height="6.2" fill="#2a5bb5"/><path d="M1.4 4.4l.9 3.4.9-3 .9 3 .9-3.4" fill="none" stroke="#fff" stroke-width="0.8"/></svg>
<span class="t" style="left:176.8px;top:367.4px;font-size:8.8px;line-height:11.44px;color:#222;letter-spacing:-0.432px;">Business Plan.docx</span>
<span class="t" style="left:421.5px;top:367.4px;font-size:8.8px;line-height:11.44px;color:#222;letter-spacing:-0.200px;">Tom Brown</span>
<span class="t" style="left:467.6px;top:367.4px;font-size:8.8px;line-height:11.44px;color:#222;letter-spacing:-0.246px;">New York</span>
<span class="t" style="left:512.8px;top:367.4px;font-size:8.8px;line-height:11.44px;color:#222;letter-spacing:-0.371px;">Green</span>
<span class="t" style="left:558.6px;top:367.4px;font-size:8.8px;line-height:11.44px;color:#222;letter-spacing:-0.464px;">Sally Jones</span>
<svg style="left:153px;top:382.14px" width="12" height="12" viewBox="0 0 12 12"><path d="M3.5 0.5h5.2l2.8 2.6v8.4h-8z" fill="#fff" stroke="#8a8f99" stroke-width="0.8"/><path d="M7.8 4.6h2.6M7.8 6.2h2.6M7.8 7.8h2.6" stroke="#1e7a45" stroke-width="0.8"/><rect x="0.3" y="3" width="6.6" height="6.2" fill="#1c7a43"/><path d="M2 4.4l3.2 3.4M5.2 4.4L2 7.8" fill="none" stroke="#fff" stroke-width="0.9"/></svg>
<span class="t" style="left:176.8px;top:383.1px;font-size:8.8px;line-height:11.44px;color:#222;letter-spacing:-0.235px;">Car repair tracker1.xlsx</span>
<span class="t" style="left:421.5px;top:383.1px;font-size:8.8px;line-height:11.44px;color:#222;letter-spacing:-0.200px;">Tom Brown</span>
<span class="t" style="left:467.6px;top:383.1px;font-size:8.8px;line-height:11.44px;color:#222;letter-spacing:-0.246px;">New York</span>
<span class="t" style="left:512.8px;top:383.1px;font-size:8.8px;line-height:11.44px;color:#222;letter-spacing:-0.371px;">Green</span>
<span class="t" style="left:558.6px;top:383.1px;font-size:8.8px;line-height:11.44px;color:#222;letter-spacing:-0.464px;">Sally Jones</span>
<svg style="left:153px;top:397.88px" width="12" height="12" viewBox="0 0 12 12"><path d="M3.5 0.5h5.2l2.8 2.6v8.4h-8z" fill="#fff" stroke="#8a8f99" stroke-width="0.8"/><path d="M7.8 4.6h2.6M7.8 6.2h2.6M7.8 7.8h2.6" stroke="#3b6fc4" stroke-width="0.8"/><rect x="0.3" y="3" width="6.6" height="6.2" fill="#2a5bb5"/><path d="M1.4 4.4l.9 3.4.9-3 .9 3 .9-3.4" fill="none" stroke="#fff" stroke-width="0.8"/></svg>
<span class="t" style="left:176.8px;top:398.9px;font-size:8.8px;line-height:11.44px;color:#222;letter-spacing:-0.511px;">201 GINGER.docx</span>
<span class="t" style="left:421.5px;top:398.9px;font-size:8.8px;line-height:11.44px;color:#222;letter-spacing:-0.200px;">Tom Brown</span>
<span class="t" style="left:467.6px;top:398.9px;font-size:8.8px;line-height:11.44px;color:#222;letter-spacing:-0.246px;">New York</span>
<span class="t" style="left:512.8px;top:398.9px;font-size:8.8px;line-height:11.44px;color:#222;letter-spacing:-0.371px;">Green</span>
<span class="t" style="left:558.6px;top:398.9px;font-size:8.8px;line-height:11.44px;color:#222;letter-spacing:-0.464px;">Sally Jones</span>
<svg style="left:153px;top:413.62px" width="12" height="12" viewBox="0 0 12 12"><path d="M3.5 0.5h5.2l2.8 2.6v8.4h-8z" fill="#fff" stroke="#8a8f99" stroke-width="0.8"/><path d="M7.8 4.6h2.6M7.8 6.2h2.6M7.8 7.8h2.6" stroke="#3b6fc4" stroke-width="0.8"/><rect x="0.3" y="3" width="6.6" height="6.2" fill="#2a5bb5"/><path d="M1.4 4.4l.9 3.4.9-3 .9 3 .9-3.4" fill="none" stroke="#fff" stroke-width="0.8"/></svg>
<span class="t" style="left:176.8px;top:414.6px;font-size:8.8px;line-height:11.44px;color:#222;letter-spacing:-0.168px;">Marketing Plan Matter 00001.docx</span>
<span class="t" style="left:421.5px;top:414.6px;font-size:8.8px;line-height:11.44px;color:#222;letter-spacing:-0.473px;">Sally Jones</span>
<span class="t" style="left:467.6px;top:414.6px;font-size:8.8px;line-height:11.44px;color:#222;letter-spacing:-0.246px;">New York</span>
<span class="t" style="left:512.8px;top:414.6px;font-size:8.8px;line-height:11.44px;color:#222;letter-spacing:-0.602px;">Blue</span>
<span class="t" style="left:558.6px;top:414.6px;font-size:8.8px;line-height:11.44px;color:#222;letter-spacing:-0.122px;">Tom Brown</span>
<svg style="left:154.2px;top:429.76px" width="10" height="12" viewBox="0 0 10 12"><path d="M1.6 0.6h4.8l2.8 2.8v6.8q0 1-1 1H1.6q-1 0-1-1V1.6q0-1 1-1z" fill="#fff" stroke="#e2543c" stroke-width="1"/><path d="M2.4 9c1.4-1.4 2.6-4.2 2.2-5.8-.8.4.2 3.2 2.8 4.4-1.600-.6-3.800.2-5 1.400z" fill="none" stroke="#e2543c" stroke-width="0.8"/></svg>
<span class="t" style="left:176.8px;top:430.3px;font-size:8.8px;line-height:11.44px;color:#222;letter-spacing:-0.194px;">Marketing Plan 2020 Q2.pdf</span>
<span class="t" style="left:421.5px;top:430.3px;font-size:8.8px;line-height:11.44px;color:#222;letter-spacing:-0.473px;">Sally Jones</span>
<span class="t" style="left:467.6px;top:430.3px;font-size:8.8px;line-height:11.44px;color:#222;letter-spacing:-0.246px;">New York</span>
<span class="t" style="left:512.8px;top:430.3px;font-size:8.8px;line-height:11.44px;color:#222;letter-spacing:-0.602px;">Blue</span>
<span class="t" style="left:558.6px;top:430.3px;font-size:8.8px;line-height:11.44px;color:#222;letter-spacing:-0.122px;">Tom Brown</span>
<svg style="left:153px;top:445.1px" width="12" height="12" viewBox="0 0 12 12"><path d="M3.5 0.5h5.2l2.8 2.6v8.4h-8z" fill="#fff" stroke="#8a8f99" stroke-width="0.8"/><path d="M7.8 4.6h2.6M7.8 6.2h2.6M7.8 7.8h2.6" stroke="#1e7a45" stroke-width="0.8"/><rect x="0.3" y="3" width="6.6" height="6.2" fill="#1c7a43"/><path d="M2 4.4l3.2 3.4M5.2 4.4L2 7.8" fill="none" stroke="#fff" stroke-width="0.9"/></svg>
<span class="t" style="left:176.8px;top:446.1px;font-size:8.8px;line-height:11.44px;color:#222;letter-spacing:-0.351px;">D_B Business Verification.xlsx</span>
<span class="t" style="left:421.5px;top:446.1px;font-size:8.8px;line-height:11.44px;color:#222;letter-spacing:-0.200px;">Tom Brown</span>
<span class="t" style="left:467.6px;top:446.1px;font-size:8.8px;line-height:11.44px;color:#222;letter-spacing:-0.278px;">United Ki...</span>
<span class="t" style="left:512.8px;top:446.1px;font-size:8.8px;line-height:11.44px;color:#222;letter-spacing:-0.371px;">Green</span>
<span class="t" style="left:558.6px;top:446.1px;font-size:8.8px;line-height:11.44px;color:#222;letter-spacing:-0.464px;">Sally Jones</span>
<svg style="left:154.2px;top:461.24px" width="10" height="12" viewBox="0 0 10 12"><path d="M1.6 0.6h4.8l2.8 2.8v6.8q0 1-1 1H1.6q-1 0-1-1V1.6q0-1 1-1z" fill="#fff" stroke="#e2543c" stroke-width="1"/><path d="M2.4 9c1.4-1.4 2.6-4.2 2.2-5.8-.8.4.2 3.2 2.8 4.4-1.600-.6-3.800.2-5 1.400z" fill="none" stroke="#e2543c" stroke-width="0.8"/></svg>
<span class="t" style="left:176.8px;top:461.8px;font-size:8.8px;line-height:11.44px;color:#222;letter-spacing:-0.103px;">112020 Report update.pdf</span>
<span class="t" style="left:421.5px;top:461.8px;font-size:8.8px;line-height:11.44px;color:#222;letter-spacing:-0.200px;">Tom Brown</span>
<span class="t" style="left:512.8px;top:461.8px;font-size:8.8px;line-height:11.44px;color:#222;letter-spacing:-0.714px;">Red</span>
<svg style="left:153px;top:476.58px" width="13" height="12" viewBox="0 0 13 12"><rect x="5" y="1.2" width="7.2" height="9.4" fill="#2f9be6"/><rect x="8.4" y="6" width="3.8" height="4.6" fill="#1566b8"/><rect x="0.3" y="2.4" width="7.4" height="7.4" rx="0.8" fill="#0f6ac2"/><circle cx="4" cy="6.1" r="1.9" fill="none" stroke="#fff" stroke-width="1.1"/></svg>
<span class="t" style="left:176.8px;top:477.6px;font-size:8.8px;line-height:11.44px;color:#222;letter-spacing:-0.148px;">11Project 2020 update_tembb4.eml</span>
<span class="t" style="left:421.5px;top:477.6px;font-size:8.8px;line-height:11.44px;color:#222;letter-spacing:-0.200px;">Tom Brown</span>
<span class="t" style="left:512.8px;top:477.6px;font-size:8.8px;line-height:11.44px;color:#222;letter-spacing:-0.714px;">Red</span>
<svg style="left:168.5px;top:211px" width="7" height="7" viewBox="0 0 7 7"><rect x="0" y="0" width="6.600" height="6.800" fill="#1d4fa8"/><path d="M1.400 3.400h3M3.200 1.800l1.600 1.600-1.600 1.600" stroke="#fff" stroke-width="1" fill="none"/></svg>
<div class="r" style="left:175.4px;top:235.5px;width:195.0px;height:13.8px;background:#fff;border:1px solid #767676;box-sizing:border-box;"></div>
<span class="t" style="left:180.0px;top:237.6px;font-size:9.2px;line-height:11.96px;color:#6a6a6a;letter-spacing:-0.257px;">Checked out to Sally Jones, Current Version: 5.0</span>
<svg style="left:170.6px;top:211.800px" width="17" height="27" viewBox="0 0 14 22"><path d="M0.600 0.800v16.600l3.800-3.600 2.800 6.500 2.300-1-2.800-6.300h5.300z" fill="#fff" stroke="#111" stroke-width="1" stroke-linejoin="round"/></svg>
<span class="t" style="left:644.0px;top:119.8px;font-size:8.8px;line-height:11.44px;color:#1565c0;letter-spacing:-0.147px;text-decoration:underline;">Switch to Properties</span>
<div class="r" style="left:639.0px;top:132.8px;width:315.0px;height:1.0px;background:#c6c6c6;"></div>
<div class="r" style="left:949.0px;top:144.0px;width:8.5px;height:338.0px;background:#fff;"></div>
<div class="r" style="left:949.5px;top:159.0px;width:8.0px;height:0.8px;background:#c4c4c4;"></div>
<div class="r" style="left:949.5px;top:243.0px;width:8.0px;height:0.8px;background:#c4c4c4;"></div>
<svg style="left:950.5px;top:146.5px" width="10" height="8" viewBox="0 0 10 8"><path d="M1 6.300l4.600-5 4.600 5" stroke="#555" stroke-width="1.600" fill="none"/></svg>
<svg style="left:949.5px;top:463.500px" width="8" height="7" viewBox="0 0 8 7"><path d="M1 1.500l3 3.500 3-3.500" stroke="#555" stroke-width="1.200" fill="none"/></svg>
<div class="r" style="left:640.0px;top:134.0px;width:8.0px;height:354.0px;background:#f8f8fa;"></div>
<div class="r" style="left:640.0px;top:481.3px;width:317.0px;height:6.7px;background:#fbfbfb;"></div>
<div class="r" style="left:664.0px;top:481.5px;width:170.5px;height:6.5px;background:#fff;border-left:1px solid #cfcfcf;border-right:1px solid #cfcfcf;box-sizing:border-box;"></div>
<svg style="left:652.500px;top:484px" width="7" height="7" viewBox="0 0 7 7"><path d="M5.500 0.300l-4.500 4 4.500 4" stroke="#555" stroke-width="1.300" fill="none"/></svg>
<svg style="left:929px;top:484px" width="7" height="7" viewBox="0 0 7 7"><path d="M1.500 0.300l4.500 4-4.500 4" stroke="#555" stroke-width="1.300" fill="none"/></svg>
<div class="r" style="left:647.0px;top:143.0px;width:303.0px;height:340.0px;background:#ededed;"></div>
<svg style="left:648px;top:144px" width="301" height="120" viewBox="0 0 301 120"><defs><filter id="bl" x="0" y="0" width="100%" height="100%"><feGaussianBlur stdDeviation="0.75"/></filter><clipPath id="pc"><rect x="0" y="0" width="301" height="120"/></clipPath></defs><g clip-path="url(#pc)"><g filter="url(#bl)"><rect x="0.0" y="0.0" width="301.0" height="120.0" fill="#969696"/><rect x="0.0" y="0.0" width="42.0" height="120.0" fill="#2c2c2c"/><rect x="4.0" y="2.0" width="22.0" height="2.2" fill="#4e4e4e"/><rect x="4.0" y="8.1" width="22.0" height="2.2" fill="#484848"/><rect x="4.0" y="14.2" width="22.0" height="2.2" fill="#505050"/><rect x="4.0" y="20.3" width="22.0" height="2.2" fill="#585858"/><rect x="4.0" y="26.4" width="22.0" height="2.2" fill="#454545"/><rect x="4.0" y="32.5" width="22.0" height="2.2" fill="#464646"/><rect x="4.0" y="38.6" width="22.0" height="2.2" fill="#555555"/><rect x="4.0" y="44.7" width="22.0" height="2.2" fill="#474747"/><rect x="4.0" y="50.8" width="22.0" height="2.2" fill="#4f4f4f"/><rect x="4.0" y="56.9" width="22.0" height="2.2" fill="#565656"/><rect x="4.0" y="63.0" width="22.0" height="2.2" fill="#454545"/><rect x="4.0" y="69.1" width="22.0" height="2.2" fill="#545454"/><rect x="4.0" y="75.2" width="22.0" height="2.2" fill="#4a4a4a"/><rect x="4.0" y="81.3" width="22.0" height="2.2" fill="#454545"/><rect x="4.0" y="87.4" width="22.0" height="2.2" fill="#464646"/><rect x="4.0" y="93.5" width="22.0" height="2.2" fill="#515151"/><rect x="4.0" y="99.6" width="22.0" height="2.2" fill="#515151"/><rect x="4.0" y="105.7" width="22.0" height="2.2" fill="#464646"/><rect x="4.0" y="111.8" width="22.0" height="2.2" fill="#4b4b4b"/><rect x="4.0" y="117.9" width="22.0" height="2.2" fill="#464646"/><rect x="27.0" y="0.0" width="6.0" height="120.0" fill="#5f5f5f"/><rect x="35.0" y="0.0" width="5.5" height="120.0" fill="#646464"/><rect x="28.0" y="1.0" width="4.0" height="2.6" fill="#282828"/><rect x="36.0" y="1.0" width="3.5" height="2.6" fill="#2d2d2d"/><rect x="28.0" y="6.0" width="4.0" height="2.6" fill="#282828"/><rect x="36.0" y="6.0" width="3.5" height="2.6" fill="#2d2d2d"/><rect x="28.0" y="11.0" width="4.0" height="2.6" fill="#282828"/><rect x="36.0" y="11.0" width="3.5" height="2.6" fill="#2d2d2d"/><rect x="28.0" y="16.0" width="4.0" height="2.6" fill="#282828"/><rect x="36.0" y="16.0" width="3.5" height="2.6" fill="#2d2d2d"/><rect x="28.0" y="21.0" width="4.0" height="2.6" fill="#282828"/><rect x="36.0" y="21.0" width="3.5" height="2.6" fill="#2d2d2d"/><rect x="28.0" y="26.0" width="4.0" height="2.6" fill="#282828"/><rect x="36.0" y="26.0" width="3.5" height="2.6" fill="#2d2d2d"/><rect x="28.0" y="31.0" width="4.0" height="2.6" fill="#282828"/><rect x="36.0" y="31.0" width="3.5" height="2.6" fill="#2d2d2d"/><rect x="28.0" y="36.0" width="4.0" height="2.6" fill="#282828"/><rect x="36.0" y="36.0" width="3.5" height="2.6" fill="#2d2d2d"/><rect x="28.0" y="41.0" width="4.0" height="2.6" fill="#282828"/><rect x="36.0" y="41.0" width="3.5" height="2.6" fill="#2d2d2d"/><rect x="28.0" y="46.0" width="4.0" height="2.6" fill="#282828"/><rect x="36.0" y="46.0" width="3.5" height="2.6" fill="#2d2d2d"/><rect x="28.0" y="51.0" width="4.0" height="2.6" fill="#282828"/><rect x="36.0" y="51.0" width="3.5" height="2.6" fill="#2d2d2d"/><rect x="28.0" y="56.0" width="4.0" height="2.6" fill="#282828"/><rect x="36.0" y="56.0" width="3.5" height="2.6" fill="#2d2d2d"/><rect x="28.0" y="61.0" width="4.0" height="2.6" fill="#282828"/><rect x="36.0" y="61.0" width="3.5" height="2.6" fill="#2d2d2d"/><rect x="28.0" y="66.0" width="4.0" height="2.6" fill="#282828"/><rect x="36.0" y="66.0" width="3.5" height="2.6" fill="#2d2d2d"/><rect x="28.0" y="71.0" width="4.0" height="2.6" fill="#282828"/><rect x="36.0" y="71.0" width="3.5" height="2.6" fill="#2d2d2d"/><rect x="28.0" y="76.0" width="4.0" height="2.6" fill="#282828"/><rect x="36.0" y="76.0" width="3.5" height="2.6" fill="#2d2d2d"/><rect x="28.0" y="81.0" width="4.0" height="2.6" fill="#282828"/><rect x="36.0" y="81.0" width="3.5" height="2.6" fill="#2d2d2d"/><rect x="28.0" y="86.0" width="4.0" height="2.6" fill="#282828"/><rect x="36.0" y="86.0" width="3.5" height="2.6" fill="#2d2d2d"/><rect x="28.0" y="91.0" width="4.0" height="2.6" fill="#282828"/><rect x="36.0" y="91.0" width="3.5" height="2.6" fill="#2d2d2d"/><rect x="28.0" y="96.0" width="4.0" height="2.6" fill="#282828"/><rect x="36.0" y="96.0" width="3.5" height="2.6" fill="#2d2d2d"/><rect x="28.0" y="101.0" width="4.0" height="2.6" fill="#282828"/><rect x="36.0" y="101.0" width="3.5" height="2.6" fill="#2d2d2d"/><rect x="28.0" y="106.0" width="4.0" height="2.6" fill="#282828"/><rect x="36.0" y="106.0" width="3.5" height="2.6" fill="#2d2d2d"/><rect x="28.0" y="111.0" width="4.0" height="2.6" fill="#282828"/><rect x="36.0" y="111.0" width="3.5" height="2.6" fill="#2d2d2d"/><rect x="28.0" y="116.0" width="4.0" height="2.6" fill="#282828"/><rect x="36.0" y="116.0" width="3.5" height="2.6" fill="#2d2d2d"/><rect x="0.0" y="0.0" width="3.0" height="120.0" fill="#505050"/><rect x="40.5" y="0.0" width="1.5" height="120.0" fill="#3c3c3c"/><rect x="26.0" y="55.0" width="16.0" height="2.5" fill="#787878"/><rect x="0.0" y="0.0" width="42.0" height="3.0" fill="#464646"/><rect x="42.0" y="0.0" width="29.0" height="10.0" fill="#9f9f9f"/><rect x="42.0" y="10.0" width="29.0" height="10.0" fill="#9b9b9b"/><rect x="42.0" y="20.0" width="29.0" height="10.0" fill="#a9a9a9"/><rect x="42.0" y="30.0" width="29.0" height="10.0" fill="#bababa"/><rect x="42.0" y="40.0" width="29.0" height="10.0" fill="#ababab"/><rect x="42.0" y="50.0" width="29.0" height="10.0" fill="#afafaf"/><rect x="42.0" y="60.0" width="29.0" height="10.0" fill="#bababa"/><rect x="42.0" y="70.0" width="29.0" height="10.0" fill="#a9a9a9"/><rect x="42.0" y="80.0" width="29.0" height="10.0" fill="#aaaaaa"/><rect x="42.0" y="90.0" width="29.0" height="10.0" fill="#aaaaaa"/><rect x="42.0" y="100.0" width="29.0" height="10.0" fill="#a4a4a4"/><rect x="42.0" y="110.0" width="29.0" height="10.0" fill="#999999"/><rect x="61.5" y="5.4" width="14.9" height="4.2" fill="#bcbcbc" opacity="0.7"/><rect x="52.8" y="65.7" width="12.5" height="5.7" fill="#bbbbbb" opacity="0.7"/><rect x="53.6" y="73.5" width="11.0" height="5.2" fill="#bababa" opacity="0.7"/><rect x="53.3" y="71.2" width="12.0" height="5.1" fill="#c2c2c2" opacity="0.7"/><rect x="51.3" y="106.2" width="10.9" height="4.0" fill="#bdbdbd" opacity="0.7"/><rect x="56.0" y="28.1" width="12.6" height="5.1" fill="#c2c2c2" opacity="0.7"/><rect x="56.6" y="33.1" width="15.8" height="3.5" fill="#c5c5c5" opacity="0.7"/><rect x="45.3" y="39.3" width="15.5" height="4.7" fill="#bababa" opacity="0.7"/><rect x="57.3" y="65.9" width="15.0" height="4.3" fill="#c3c3c3" opacity="0.7"/><rect x="53.9" y="66.7" width="11.6" height="6.4" fill="#c0c0c0" opacity="0.7"/><rect x="51.5" y="76.4" width="8.5" height="5.8" fill="#cccccc" opacity="0.7"/><rect x="53.6" y="78.3" width="11.6" height="5.9" fill="#c3c3c3" opacity="0.7"/><rect x="42.5" y="53.1" width="9.3" height="3.5" fill="#b9b9b9" opacity="0.7"/><rect x="46.4" y="33.1" width="13.9" height="4.6" fill="#c7c7c7" opacity="0.7"/><rect x="71.0" y="0.0" width="14.0" height="120.0" fill="#acacac"/><rect x="71.0" y="0.0" width="1.5" height="120.0" fill="#787878"/><rect x="75.5" y="3.0" width="2.0" height="2.8" fill="#464646"/><rect x="75.5" y="9.0" width="2.0" height="2.8" fill="#464646"/><rect x="75.5" y="15.0" width="2.0" height="2.8" fill="#464646"/><rect x="75.5" y="21.0" width="2.0" height="2.8" fill="#464646"/><rect x="75.5" y="27.0" width="2.0" height="2.8" fill="#464646"/><rect x="75.5" y="33.0" width="2.0" height="2.8" fill="#464646"/><rect x="75.5" y="39.0" width="2.0" height="2.8" fill="#464646"/><rect x="75.5" y="45.0" width="2.0" height="2.8" fill="#464646"/><rect x="75.5" y="51.0" width="2.0" height="2.8" fill="#464646"/><rect x="75.5" y="57.0" width="2.0" height="2.8" fill="#464646"/><rect x="75.5" y="63.0" width="2.0" height="2.8" fill="#464646"/><rect x="75.5" y="69.0" width="2.0" height="2.8" fill="#464646"/><rect x="75.5" y="75.0" width="2.0" height="2.8" fill="#464646"/><rect x="75.5" y="81.0" width="2.0" height="2.8" fill="#464646"/><rect x="75.5" y="87.0" width="2.0" height="2.8" fill="#464646"/><rect x="75.5" y="93.0" width="2.0" height="2.8" fill="#464646"/><rect x="75.5" y="99.0" width="2.0" height="2.8" fill="#464646"/><rect x="75.5" y="105.0" width="2.0" height="2.8" fill="#464646"/><rect x="75.5" y="111.0" width="2.0" height="2.8" fill="#464646"/><rect x="75.5" y="117.0" width="2.0" height="2.8" fill="#464646"/><rect x="82.0" y="0.0" width="3.0" height="120.0" fill="#969696"/><rect x="85.0" y="0.0" width="35.0" height="120.0" fill="#969696"/><rect x="86.0" y="2.0" width="9.0" height="4.0" fill="#262626"/><rect x="97.5" y="2.0" width="9.0" height="4.0" fill="#2d2d2d"/><rect x="109.0" y="2.0" width="9.5" height="4.0" fill="#343434"/><rect x="86.0" y="8.3" width="9.0" height="4.0" fill="#262626"/><rect x="97.5" y="8.3" width="9.0" height="4.0" fill="#2d2d2d"/><rect x="109.0" y="8.3" width="9.5" height="4.0" fill="#343434"/><rect x="86.0" y="14.6" width="9.0" height="4.0" fill="#262626"/><rect x="97.5" y="14.6" width="9.0" height="4.0" fill="#2d2d2d"/><rect x="109.0" y="14.6" width="9.5" height="4.0" fill="#343434"/><rect x="86.0" y="20.9" width="9.0" height="4.0" fill="#262626"/><rect x="97.5" y="20.9" width="9.0" height="4.0" fill="#2d2d2d"/><rect x="109.0" y="20.9" width="9.5" height="4.0" fill="#343434"/><rect x="86.0" y="27.2" width="9.0" height="4.0" fill="#262626"/><rect x="97.5" y="27.2" width="9.0" height="4.0" fill="#2d2d2d"/><rect x="109.0" y="27.2" width="9.5" height="4.0" fill="#343434"/><rect x="86.0" y="33.5" width="9.0" height="4.0" fill="#262626"/><rect x="97.5" y="33.5" width="9.0" height="4.0" fill="#2d2d2d"/><rect x="109.0" y="33.5" width="9.5" height="4.0" fill="#343434"/><rect x="86.0" y="39.8" width="9.0" height="4.0" fill="#262626"/><rect x="97.5" y="39.8" width="9.0" height="4.0" fill="#2d2d2d"/><rect x="109.0" y="39.8" width="9.5" height="4.0" fill="#343434"/><rect x="86.0" y="46.1" width="9.0" height="4.0" fill="#262626"/><rect x="97.5" y="46.1" width="9.0" height="4.0" fill="#2d2d2d"/><rect x="109.0" y="46.1" width="9.5" height="4.0" fill="#343434"/><rect x="86.0" y="52.4" width="9.0" height="4.0" fill="#262626"/><rect x="97.5" y="52.4" width="9.0" height="4.0" fill="#2d2d2d"/><rect x="109.0" y="52.4" width="9.5" height="4.0" fill="#343434"/><rect x="86.0" y="58.7" width="9.0" height="4.0" fill="#262626"/><rect x="97.5" y="58.7" width="9.0" height="4.0" fill="#2d2d2d"/><rect x="109.0" y="58.7" width="9.5" height="4.0" fill="#343434"/><rect x="86.0" y="65.0" width="9.0" height="4.0" fill="#262626"/><rect x="97.5" y="65.0" width="9.0" height="4.0" fill="#2d2d2d"/><rect x="109.0" y="65.0" width="9.5" height="4.0" fill="#343434"/><rect x="86.0" y="71.3" width="9.0" height="4.0" fill="#262626"/><rect x="97.5" y="71.3" width="9.0" height="4.0" fill="#2d2d2d"/><rect x="109.0" y="71.3" width="9.5" height="4.0" fill="#343434"/><rect x="86.0" y="77.6" width="9.0" height="4.0" fill="#262626"/><rect x="97.5" y="77.6" width="9.0" height="4.0" fill="#2d2d2d"/><rect x="109.0" y="77.6" width="9.5" height="4.0" fill="#343434"/><rect x="86.0" y="83.9" width="9.0" height="4.0" fill="#262626"/><rect x="97.5" y="83.9" width="9.0" height="4.0" fill="#2d2d2d"/><rect x="109.0" y="83.9" width="9.5" height="4.0" fill="#343434"/><rect x="86.0" y="90.2" width="9.0" height="4.0" fill="#262626"/><rect x="97.5" y="90.2" width="9.0" height="4.0" fill="#2d2d2d"/><rect x="109.0" y="90.2" width="9.5" height="4.0" fill="#343434"/><rect x="86.0" y="96.5" width="9.0" height="4.0" fill="#262626"/><rect x="97.5" y="96.5" width="9.0" height="4.0" fill="#2d2d2d"/><rect x="109.0" y="96.5" width="9.5" height="4.0" fill="#343434"/><rect x="86.0" y="102.8" width="9.0" height="4.0" fill="#262626"/><rect x="97.5" y="102.8" width="9.0" height="4.0" fill="#2d2d2d"/><rect x="109.0" y="102.8" width="9.5" height="4.0" fill="#343434"/><rect x="86.0" y="109.1" width="9.0" height="4.0" fill="#262626"/><rect x="97.5" y="109.1" width="9.0" height="4.0" fill="#2d2d2d"/><rect x="109.0" y="109.1" width="9.5" height="4.0" fill="#343434"/><rect x="86.0" y="115.4" width="9.0" height="4.0" fill="#262626"/><rect x="97.5" y="115.4" width="9.0" height="4.0" fill="#2d2d2d"/><rect x="109.0" y="115.4" width="9.5" height="4.0" fill="#343434"/><rect x="85.0" y="0.0" width="20.0" height="10.0" fill="#afafaf" opacity="0.85"/><rect x="88.0" y="4.0" width="7.0" height="3.0" fill="#3c3c3c"/><rect x="99.0" y="6.0" width="6.0" height="3.0" fill="#3c3c3c"/><rect x="86.0" y="60.0" width="5.0" height="3.0" fill="#969696" opacity="0.8"/><rect x="86.6" y="66.0" width="5.0" height="3.0" fill="#969696" opacity="0.8"/><rect x="87.2" y="72.0" width="5.0" height="3.0" fill="#969696" opacity="0.8"/><rect x="87.8" y="78.0" width="5.0" height="3.0" fill="#969696" opacity="0.8"/><rect x="88.4" y="84.0" width="5.0" height="3.0" fill="#969696" opacity="0.8"/><rect x="89.0" y="90.0" width="5.0" height="3.0" fill="#969696" opacity="0.8"/><rect x="89.6" y="96.0" width="5.0" height="3.0" fill="#969696" opacity="0.8"/><rect x="90.2" y="102.0" width="5.0" height="3.0" fill="#969696" opacity="0.8"/><rect x="90.8" y="108.0" width="5.0" height="3.0" fill="#969696" opacity="0.8"/><rect x="91.4" y="114.0" width="5.0" height="3.0" fill="#969696" opacity="0.8"/><rect x="120.0" y="0.0" width="16.0" height="120.0" fill="#878787"/><rect x="121.5" y="2.0" width="4.0" height="3.8" fill="#323232"/><rect x="128.0" y="2.0" width="4.0" height="3.8" fill="#373737"/><rect x="121.5" y="8.3" width="4.0" height="3.8" fill="#323232"/><rect x="128.0" y="8.3" width="4.0" height="3.8" fill="#373737"/><rect x="121.5" y="14.6" width="4.0" height="3.8" fill="#323232"/><rect x="128.0" y="14.6" width="4.0" height="3.8" fill="#373737"/><rect x="121.5" y="20.9" width="4.0" height="3.8" fill="#323232"/><rect x="128.0" y="20.9" width="4.0" height="3.8" fill="#373737"/><rect x="121.5" y="27.2" width="4.0" height="3.8" fill="#323232"/><rect x="128.0" y="27.2" width="4.0" height="3.8" fill="#373737"/><rect x="121.5" y="33.5" width="4.0" height="3.8" fill="#323232"/><rect x="128.0" y="33.5" width="4.0" height="3.8" fill="#373737"/><rect x="121.5" y="39.8" width="4.0" height="3.8" fill="#323232"/><rect x="128.0" y="39.8" width="4.0" height="3.8" fill="#373737"/><rect x="121.5" y="46.1" width="4.0" height="3.8" fill="#323232"/><rect x="128.0" y="46.1" width="4.0" height="3.8" fill="#373737"/><rect x="121.5" y="52.4" width="4.0" height="3.8" fill="#323232"/><rect x="128.0" y="52.4" width="4.0" height="3.8" fill="#373737"/><rect x="121.5" y="58.7" width="4.0" height="3.8" fill="#323232"/><rect x="128.0" y="58.7" width="4.0" height="3.8" fill="#373737"/><rect x="121.5" y="65.0" width="4.0" height="3.8" fill="#323232"/><rect x="128.0" y="65.0" width="4.0" height="3.8" fill="#373737"/><rect x="121.5" y="71.3" width="4.0" height="3.8" fill="#323232"/><rect x="128.0" y="71.3" width="4.0" height="3.8" fill="#373737"/><rect x="121.5" y="77.6" width="4.0" height="3.8" fill="#323232"/><rect x="128.0" y="77.6" width="4.0" height="3.8" fill="#373737"/><rect x="121.5" y="83.9" width="4.0" height="3.8" fill="#323232"/><rect x="128.0" y="83.9" width="4.0" height="3.8" fill="#373737"/><rect x="121.5" y="90.2" width="4.0" height="3.8" fill="#323232"/><rect x="128.0" y="90.2" width="4.0" height="3.8" fill="#373737"/><rect x="121.5" y="96.5" width="4.0" height="3.8" fill="#323232"/><rect x="128.0" y="96.5" width="4.0" height="3.8" fill="#373737"/><rect x="121.5" y="102.8" width="4.0" height="3.8" fill="#323232"/><rect x="128.0" y="102.8" width="4.0" height="3.8" fill="#373737"/><rect x="121.5" y="109.1" width="4.0" height="3.8" fill="#323232"/><rect x="128.0" y="109.1" width="4.0" height="3.8" fill="#373737"/><rect x="121.5" y="115.4" width="4.0" height="3.8" fill="#323232"/><rect x="128.0" y="115.4" width="4.0" height="3.8" fill="#373737"/><rect x="133.5" y="0.0" width="2.5" height="120.0" fill="#6e6e6e"/><rect x="136.0" y="0.0" width="36.0" height="120.0" fill="#3e3e3e"/><rect x="139.0" y="1.0" width="24.0" height="2.8" fill="#525252"/><rect x="139.0" y="7.0" width="24.0" height="2.8" fill="#555555"/><rect x="139.0" y="13.0" width="24.0" height="2.8" fill="#5e5e5e"/><rect x="139.0" y="19.0" width="24.0" height="2.8" fill="#5c5c5c"/><rect x="139.0" y="25.0" width="24.0" height="2.8" fill="#585858"/><rect x="139.0" y="31.0" width="24.0" height="2.8" fill="#545454"/><rect x="139.0" y="37.0" width="24.0" height="2.8" fill="#5d5d5d"/><rect x="139.0" y="43.0" width="24.0" height="2.8" fill="#585858"/><rect x="139.0" y="49.0" width="24.0" height="2.8" fill="#5d5d5d"/><rect x="139.0" y="55.0" width="24.0" height="2.8" fill="#5b5b5b"/><rect x="139.0" y="61.0" width="24.0" height="2.8" fill="#5c5c5c"/><rect x="139.0" y="67.0" width="24.0" height="2.8" fill="#575757"/><rect x="139.0" y="73.0" width="24.0" height="2.8" fill="#545454"/><rect x="139.0" y="79.0" width="24.0" height="2.8" fill="#525252"/><rect x="139.0" y="85.0" width="24.0" height="2.8" fill="#555555"/><rect x="139.0" y="91.0" width="24.0" height="2.8" fill="#545454"/><rect x="139.0" y="97.0" width="24.0" height="2.8" fill="#575757"/><rect x="139.0" y="103.0" width="24.0" height="2.8" fill="#575757"/><rect x="139.0" y="109.0" width="24.0" height="2.8" fill="#505050"/><rect x="139.0" y="115.0" width="24.0" height="2.8" fill="#5f5f5f"/><rect x="136.0" y="0.0" width="3.0" height="120.0" fill="#787878"/><rect x="163.0" y="0.0" width="3.0" height="120.0" fill="#646464"/><rect x="166.0" y="0.0" width="6.0" height="120.0" fill="#464646"/><rect x="150.0" y="0.0" width="2.0" height="120.0" fill="#323232" opacity="0.6"/><rect x="172.0" y="0.0" width="13.0" height="36.0" fill="#464646"/><rect x="172.0" y="1.0" width="13.0" height="3.2" fill="#d7d7d7"/><rect x="172.0" y="7.0" width="13.0" height="3.2" fill="#d7d7d7"/><rect x="172.0" y="13.0" width="13.0" height="3.2" fill="#d7d7d7"/><rect x="172.0" y="19.0" width="13.0" height="3.2" fill="#d7d7d7"/><rect x="172.0" y="25.0" width="13.0" height="3.2" fill="#d7d7d7"/><rect x="172.0" y="31.0" width="13.0" height="3.2" fill="#d7d7d7"/><rect x="172.0" y="36.0" width="11.5" height="84.0" fill="#dedede"/><rect x="175.0" y="36.0" width="1.0" height="84.0" fill="#b4b4b4"/><rect x="179.0" y="36.0" width="1.0" height="84.0" fill="#b9b9b9"/><rect x="174.5" y="45.0" width="5.0" height="6.0" fill="#aaaaaa"/><rect x="185.0" y="0.0" width="30.0" height="120.0" fill="#303030"/><rect x="185.0" y="0.0" width="6.0" height="120.0" fill="#3c3c3c"/><rect x="197.0" y="25.0" width="7.0" height="60.0" fill="#242424"/><rect x="197.5" y="52.0" width="10.0" height="68.0" fill="#787878"/><rect x="199.0" y="54.0" width="7.0" height="2.6" fill="#373737"/><rect x="199.0" y="59.2" width="7.0" height="2.6" fill="#373737"/><rect x="199.0" y="64.4" width="7.0" height="2.6" fill="#373737"/><rect x="199.0" y="69.6" width="7.0" height="2.6" fill="#373737"/><rect x="199.0" y="74.8" width="7.0" height="2.6" fill="#373737"/><rect x="199.0" y="80.0" width="7.0" height="2.6" fill="#373737"/><rect x="199.0" y="85.2" width="7.0" height="2.6" fill="#373737"/><rect x="199.0" y="90.4" width="7.0" height="2.6" fill="#373737"/><rect x="199.0" y="95.6" width="7.0" height="2.6" fill="#373737"/><rect x="199.0" y="100.8" width="7.0" height="2.6" fill="#373737"/><rect x="199.0" y="106.0" width="7.0" height="2.6" fill="#373737"/><rect x="199.0" y="111.2" width="7.0" height="2.6" fill="#373737"/><rect x="199.0" y="116.4" width="7.0" height="2.6" fill="#373737"/><rect x="207.0" y="50.0" width="8.0" height="70.0" fill="#373737"/><rect x="215.0" y="0.0" width="86.0" height="66.0" fill="#bababa"/><rect x="278.2" y="9.5" width="11.9" height="3.9" fill="#cccccc" opacity="0.7"/><rect x="243.1" y="29.4" width="21.3" height="7.1" fill="#cacaca" opacity="0.7"/><rect x="287.2" y="34.1" width="18.4" height="5.7" fill="#d5d5d5" opacity="0.7"/><rect x="275.6" y="20.4" width="13.6" height="3.6" fill="#d2d2d2" opacity="0.7"/><rect x="245.4" y="9.9" width="21.8" height="5.6" fill="#b1b1b1" opacity="0.7"/><rect x="240.8" y="2.7" width="8.0" height="3.9" fill="#b0b0b0" opacity="0.7"/><rect x="287.1" y="31.9" width="9.0" height="4.2" fill="#c2c2c2" opacity="0.7"/><rect x="226.3" y="13.1" width="12.9" height="5.2" fill="#b1b1b1" opacity="0.7"/><rect x="223.8" y="25.4" width="21.7" height="5.9" fill="#bdbdbd" opacity="0.7"/><rect x="221.5" y="5.3" width="12.8" height="4.6" fill="#d6d6d6" opacity="0.7"/><rect x="227.3" y="1.2" width="21.3" height="6.2" fill="#b3b3b3" opacity="0.7"/><rect x="267.4" y="47.5" width="18.6" height="4.8" fill="#d3d3d3" opacity="0.7"/><rect x="280.6" y="36.2" width="11.7" height="5.2" fill="#b4b4b4" opacity="0.7"/><rect x="242.0" y="11.6" width="15.6" height="6.0" fill="#d2d2d2" opacity="0.7"/><rect x="232.0" y="42.2" width="21.8" height="8.1" fill="#b9b9b9" opacity="0.7"/><rect x="277.2" y="38.5" width="11.2" height="6.1" fill="#c0c0c0" opacity="0.7"/><rect x="270.6" y="51.5" width="19.1" height="5.8" fill="#b6b6b6" opacity="0.7"/><rect x="267.6" y="49.7" width="14.3" height="8.6" fill="#c0c0c0" opacity="0.7"/><rect x="287.6" y="19.0" width="11.1" height="4.4" fill="#b6b6b6" opacity="0.7"/><rect x="240.7" y="25.1" width="21.8" height="6.7" fill="#aaaaaa" opacity="0.7"/><rect x="251.4" y="34.0" width="19.2" height="3.5" fill="#d4d4d4" opacity="0.7"/><rect x="224.1" y="20.2" width="18.0" height="4.2" fill="#b5b5b5" opacity="0.7"/><rect x="248.0" y="33.1" width="9.2" height="8.7" fill="#d8d8d8" opacity="0.7"/><rect x="245.1" y="20.9" width="21.3" height="7.3" fill="#b4b4b4" opacity="0.7"/><rect x="290.5" y="1.4" width="16.3" height="5.8" fill="#d3d3d3" opacity="0.7"/><rect x="226.1" y="43.0" width="21.7" height="6.9" fill="#c0c0c0" opacity="0.7"/><rect x="226.8" y="28.5" width="8.3" height="7.8" fill="#d8d8d8" opacity="0.7"/><rect x="264.4" y="27.4" width="21.1" height="5.6" fill="#b6b6b6" opacity="0.7"/><rect x="277.8" y="11.0" width="11.5" height="4.8" fill="#b9b9b9" opacity="0.7"/><rect x="273.0" y="17.0" width="15.6" height="8.0" fill="#adadad" opacity="0.7"/><rect x="215.0" y="0.0" width="50.0" height="10.0" fill="#969696" opacity="0.5"/><rect x="209.0" y="44.0" width="13.0" height="76.0" fill="#d7d7d7"/><rect x="206.0" y="70.0" width="18.0" height="50.0" fill="#cdcdcd"/><rect x="208.0" y="74.0" width="14.0" height="2.2" fill="#787878"/><rect x="208.0" y="79.2" width="14.0" height="2.2" fill="#787878"/><rect x="208.0" y="84.4" width="14.0" height="2.2" fill="#787878"/><rect x="208.0" y="89.6" width="14.0" height="2.2" fill="#787878"/><rect x="208.0" y="94.8" width="14.0" height="2.2" fill="#787878"/><rect x="208.0" y="100.0" width="14.0" height="2.2" fill="#787878"/><rect x="208.0" y="105.2" width="14.0" height="2.2" fill="#787878"/><rect x="208.0" y="110.4" width="14.0" height="2.2" fill="#787878"/><rect x="208.0" y="115.6" width="14.0" height="2.2" fill="#787878"/><path d="M224 62 Q226 44 240 46 Q252 50 262 62 L262 70 L224 70z" fill="#343434"/><rect x="222.0" y="66.0" width="8.0" height="54.0" fill="#2d2d2d"/><rect x="230.0" y="62.0" width="64.0" height="14.0" fill="#767676"/><rect x="230.0" y="76.0" width="64.0" height="44.0" fill="#3e3e3e"/><rect x="232.0" y="78.0" width="9.0" height="2.6" fill="#828282"/><rect x="243.0" y="78.0" width="3.0" height="3.0" fill="#aaaaaa"/><rect x="249.0" y="78.0" width="9.0" height="2.6" fill="#787878"/><rect x="262.0" y="79.0" width="14.0" height="2.4" fill="#5f5f5f"/><rect x="279.0" y="78.0" width="10.0" height="2.6" fill="#555555"/><rect x="232.0" y="83.5" width="9.0" height="2.6" fill="#828282"/><rect x="243.0" y="83.5" width="3.0" height="3.0" fill="#aaaaaa"/><rect x="249.0" y="83.5" width="9.0" height="2.6" fill="#787878"/><rect x="262.0" y="84.5" width="14.0" height="2.4" fill="#5f5f5f"/><rect x="279.0" y="83.5" width="10.0" height="2.6" fill="#555555"/><rect x="232.0" y="89.0" width="9.0" height="2.6" fill="#828282"/><rect x="243.0" y="89.0" width="3.0" height="3.0" fill="#aaaaaa"/><rect x="249.0" y="89.0" width="9.0" height="2.6" fill="#787878"/><rect x="262.0" y="90.0" width="14.0" height="2.4" fill="#5f5f5f"/><rect x="279.0" y="89.0" width="10.0" height="2.6" fill="#555555"/><rect x="232.0" y="94.5" width="9.0" height="2.6" fill="#828282"/><rect x="243.0" y="94.5" width="3.0" height="3.0" fill="#aaaaaa"/><rect x="249.0" y="94.5" width="9.0" height="2.6" fill="#787878"/><rect x="262.0" y="95.5" width="14.0" height="2.4" fill="#5f5f5f"/><rect x="279.0" y="94.5" width="10.0" height="2.6" fill="#555555"/><rect x="232.0" y="100.0" width="9.0" height="2.6" fill="#828282"/><rect x="243.0" y="100.0" width="3.0" height="3.0" fill="#aaaaaa"/><rect x="249.0" y="100.0" width="9.0" height="2.6" fill="#787878"/><rect x="262.0" y="101.0" width="14.0" height="2.4" fill="#5f5f5f"/><rect x="279.0" y="100.0" width="10.0" height="2.6" fill="#555555"/><rect x="232.0" y="105.5" width="9.0" height="2.6" fill="#828282"/><rect x="243.0" y="105.5" width="3.0" height="3.0" fill="#aaaaaa"/><rect x="249.0" y="105.5" width="9.0" height="2.6" fill="#787878"/><rect x="262.0" y="106.5" width="14.0" height="2.4" fill="#5f5f5f"/><rect x="279.0" y="105.5" width="10.0" height="2.6" fill="#555555"/><rect x="232.0" y="111.0" width="9.0" height="2.6" fill="#828282"/><rect x="243.0" y="111.0" width="3.0" height="3.0" fill="#aaaaaa"/><rect x="249.0" y="111.0" width="9.0" height="2.6" fill="#787878"/><rect x="262.0" y="112.0" width="14.0" height="2.4" fill="#5f5f5f"/><rect x="279.0" y="111.0" width="10.0" height="2.6" fill="#555555"/><rect x="232.0" y="116.5" width="9.0" height="2.6" fill="#828282"/><rect x="243.0" y="116.5" width="3.0" height="3.0" fill="#aaaaaa"/><rect x="249.0" y="116.5" width="9.0" height="2.6" fill="#787878"/><rect x="262.0" y="117.5" width="14.0" height="2.4" fill="#5f5f5f"/><rect x="279.0" y="116.5" width="10.0" height="2.6" fill="#555555"/><rect x="258.0" y="76.0" width="3.0" height="44.0" fill="#afafaf"/><rect x="275.0" y="76.0" width="2.0" height="44.0" fill="#282828"/><rect x="262.0" y="52.0" width="30.0" height="12.0" fill="#303030"/><rect x="268.0" y="49.0" width="16.0" height="5.0" fill="#373737"/><rect x="285.0" y="14.0" width="16.0" height="8.0" fill="#cdcdcd"/><rect x="279.0" y="21.0" width="22.0" height="42.0" fill="#d4d4d4"/><rect x="279.0" y="26.0" width="2.0" height="30.0" fill="#5f5f5f"/><rect x="286.0" y="17.0" width="2.8" height="3.8" fill="#464646"/><rect x="291.2" y="17.0" width="2.8" height="3.8" fill="#464646"/><rect x="296.4" y="17.0" width="2.8" height="3.8" fill="#464646"/><rect x="286.0" y="23.3" width="2.8" height="3.8" fill="#464646"/><rect x="291.2" y="23.3" width="2.8" height="3.8" fill="#464646"/><rect x="296.4" y="23.3" width="2.8" height="3.8" fill="#464646"/><rect x="286.0" y="29.6" width="2.8" height="3.8" fill="#464646"/><rect x="291.2" y="29.6" width="2.8" height="3.8" fill="#464646"/><rect x="296.4" y="29.6" width="2.8" height="3.8" fill="#464646"/><rect x="286.0" y="35.9" width="2.8" height="3.8" fill="#464646"/><rect x="291.2" y="35.9" width="2.8" height="3.8" fill="#464646"/><rect x="296.4" y="35.9" width="2.8" height="3.8" fill="#464646"/><rect x="286.0" y="42.2" width="2.8" height="3.8" fill="#464646"/><rect x="291.2" y="42.2" width="2.8" height="3.8" fill="#464646"/><rect x="296.4" y="42.2" width="2.8" height="3.8" fill="#464646"/><rect x="286.0" y="48.5" width="2.8" height="3.8" fill="#464646"/><rect x="291.2" y="48.5" width="2.8" height="3.8" fill="#464646"/><rect x="296.4" y="48.5" width="2.8" height="3.8" fill="#464646"/><rect x="286.0" y="54.8" width="2.8" height="3.8" fill="#464646"/><rect x="291.2" y="54.8" width="2.8" height="3.8" fill="#464646"/><rect x="296.4" y="54.8" width="2.8" height="3.8" fill="#464646"/><rect x="271.0" y="40.0" width="10.0" height="8.0" fill="#e1e1e1"/><circle cx="276" cy="42" r="5" fill="#e6e6e6"/><rect x="290.0" y="66.0" width="11.0" height="54.0" fill="#282828"/><path d="M140 107 L188 91" stroke="#bebebe" stroke-width="2.200"/><path d="M150 85 L150 118" stroke="#a0a0a0" stroke-width="1.600"/></g></g></svg>
<div class="r" style="left:648.0px;top:264.0px;width:301.0px;height:217.3px;background:#b01a43;"></div>
<svg style="left:648px;top:264px" width="301" height="217" viewBox="648 264 301 217"><defs><clipPath id="rc"><rect x="648" y="264" width="301" height="217"/></clipPath></defs><g clip-path="url(#rc)" fill="#fff" stroke="#fff" stroke-width="0.8" font-family="Liberation Sans, sans-serif"><text x="692.2" y="327.3" font-size="33.5" textLength="246.700" lengthAdjust="spacingAndGlyphs">PROPOSAL AND</text><text x="692.2" y="369.3" font-size="33.5" textLength="289.500" lengthAdjust="spacingAndGlyphs">MARKETING PLAN</text><rect x="685.2" y="387.7" width="46.700" height="5" stroke="none"/><text x="691.7" y="421.8" font-size="26.500" stroke-width="0.450" textLength="202.600" lengthAdjust="spacingAndGlyphs">Subtitle text here</text></g></svg>
<div class="r" style="left:2.0px;top:488.0px;width:956.0px;height:50.0px;background:#8b929b;"></div>
<div class="r" style="left:2.0px;top:488.0px;width:71.0px;height:50.0px;background:#54585f;"></div>
<svg style="left:30px;top:499px" width="20" height="28" viewBox="30 499 20 28"><path d="M30 500v25.500l18-12.750z" fill="#fff"/></svg>
<span class="t" style="left:88.3px;top:496.7px;font-size:24.5px;line-height:31.85px;color:#fff;letter-spacing:-0.422px;-webkit-text-stroke:0.5px #fff;">1:34</span>
<div class="r" style="left:385.3px;top:192.5px;width:189.7px;height:123.0px;background:rgba(21,27,35,0.63);"></div>
<svg style="left:455px;top:215px" width="65" height="78" viewBox="455 215 65 78"><path d="M460.3 220.3v66.700L515 253.650z" fill="#fff"/></svg>
<span class="t" style="left:841.3px;top:512.2px;font-size:12px;line-height:15.6px;color:#808894;letter-spacing:-0.373px;">OnePlace Solutions</span>
<svg style="left:825px;top:510px" width="12" height="15" viewBox="0 0 12 15"><path d="M1 1.500q5 0 6.500 4t3.500 8" stroke="#8a8790" stroke-width="2" fill="none"/></svg>
<svg style="left:720px;top:494px" width="230" height="40" viewBox="720 494 230 40" fill="none" stroke="#fff"><path d="M724.500 509h5.500l9-4.300v16.200l-9-4.300h-5.500z" fill="#fff" stroke="none"/><path d="M744 504.800q3.600 7.700 0 15.400" stroke-width="2.600"/><path d="M749.800 500.300q6.200 12 0 24" stroke-width="2.800"/><path d="M796.500 506.600h-11v18.400h30v-12.500" stroke-width="3.100"/><path d="M801.500 520q0.500-14 14.500-19.500" stroke-width="3"/><path d="M808.300 497.300l9 2.300-3.300 9.200" stroke-width="3" stroke-linejoin="miter"/><path d="M902.500 507.500v-8h11M928.500 499.500h11v8M939.500 516.500v8h-11M913.500 524.500h-11v-8" stroke-width="3"/><rect x="909.500" y="505" width="24" height="14.500" stroke-width="3"/></svg>
<svg style="left:845px;top:497px" width="32" height="32" viewBox="845 497 32 32"><g fill="#fff"><rect x="858.4" y="498.30000000000007" width="4.200" height="6.500" transform="rotate(0 860.5 512.2)"/><rect x="858.4" y="498.30000000000007" width="4.200" height="6.500" transform="rotate(45 860.5 512.2)"/><rect x="858.4" y="498.30000000000007" width="4.200" height="6.500" transform="rotate(90 860.5 512.2)"/><rect x="858.4" y="498.30000000000007" width="4.200" height="6.500" transform="rotate(135 860.5 512.2)"/><rect x="858.4" y="498.30000000000007" width="4.200" height="6.500" transform="rotate(180 860.5 512.2)"/><rect x="858.4" y="498.30000000000007" width="4.200" height="6.500" transform="rotate(225 860.5 512.2)"/><rect x="858.4" y="498.30000000000007" width="4.200" height="6.500" transform="rotate(270 860.5 512.2)"/><rect x="858.4" y="498.30000000000007" width="4.200" height="6.500" transform="rotate(315 860.5 512.2)"/></g><circle cx="860.5" cy="512.2" r="7.300" fill="none" stroke="#fff" stroke-width="3.800"/></svg>
<div class="r" style="left:957.7px;top:0.0px;width:2.3px;height:540.0px;background:#0b63ce;"></div>
<div class="r" style="left:0.0px;top:537.8px;width:960.0px;height:2.2px;background:#0b63ce;"></div>
</div></body></html>
